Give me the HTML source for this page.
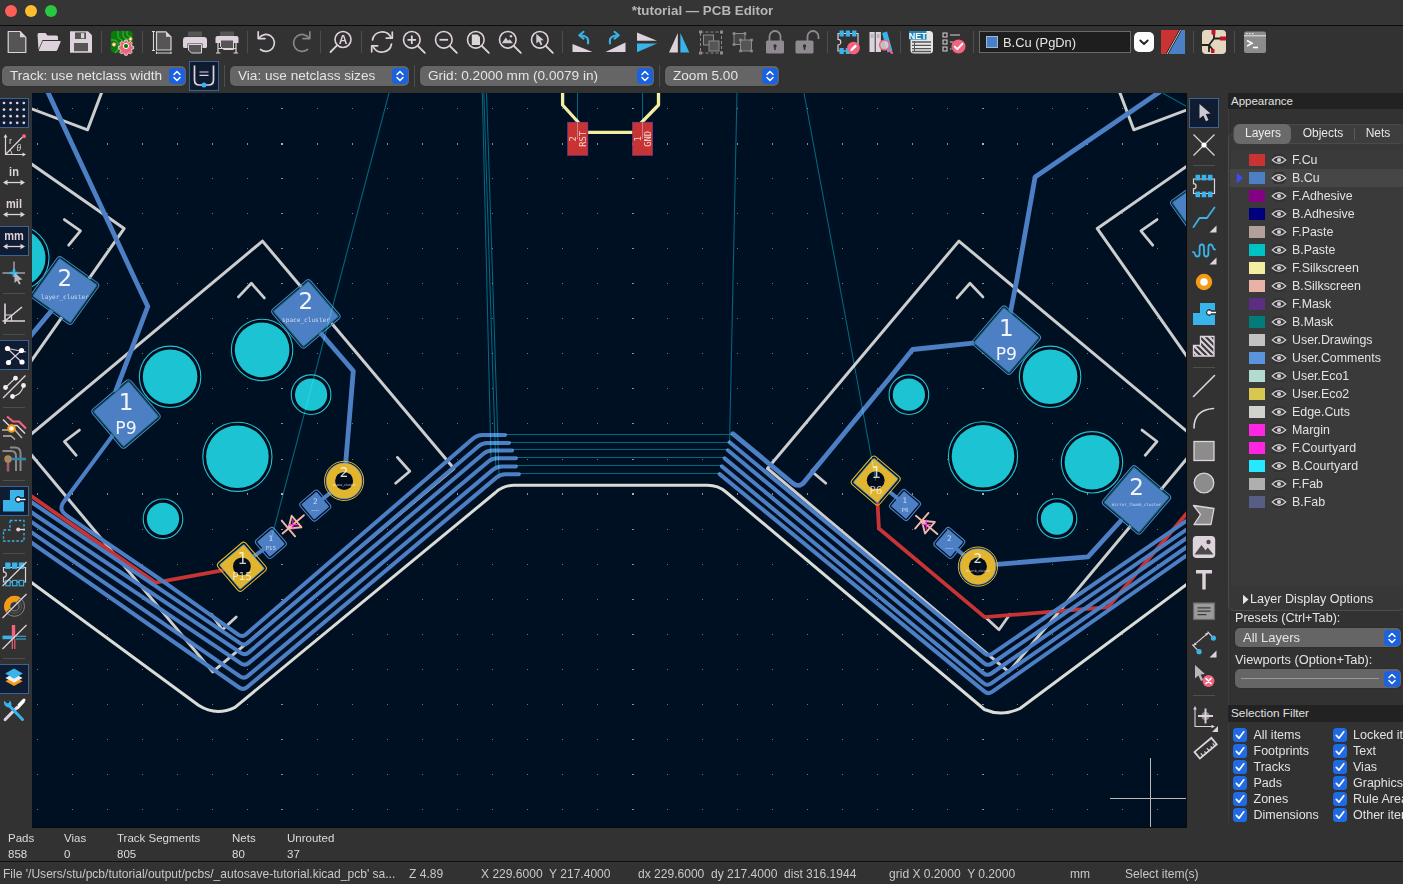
<!DOCTYPE html>
<html><head><meta charset="utf-8"><title>*tutorial — PCB Editor</title>
<style>
*{box-sizing:border-box;margin:0;padding:0}
html,body{width:1403px;height:884px;overflow:hidden;background:#323232}
body{font-family:"Liberation Sans",sans-serif;font-size:13px;color:#dfdfdf;position:relative}
.abs{position:absolute}
#titlebar{left:0;top:0;width:1403px;height:25px;background:#353535}
#titleline{left:0;top:25px;width:1403px;height:1px;background:#0c0c0c}
.tl{position:absolute;top:5px;width:12px;height:12px;border-radius:50%}
#title{left:0;top:3px;width:1403px;text-align:center;font-weight:bold;font-size:13.35px;padding-left:2px;color:#b6b6b6;letter-spacing:0px}
.sep{position:absolute;width:1px;background:#4e4e4e}
.ic{position:absolute;overflow:visible}
.dd{position:absolute;height:20px;top:66px;background:#656565;border-radius:5px;color:#e4e4e4;font-size:13.6px;line-height:20px;padding-left:8px;white-space:nowrap;box-shadow:0 0 0 0.5px #2a2a2a}
.dd .st{position:absolute;right:1.5px;top:2px;width:16px;height:16px;border-radius:4px;background:#1a62e0}
.st svg{position:absolute;left:0;top:0}
#canvas{left:32px;top:93px;width:1154px;height:734px;background:#001023;overflow:hidden}
.panelhdr{position:absolute;left:1228px;width:175px;height:16px;background:#222222;color:#e0e0e0;font-size:11.5px;line-height:16px;padding-left:3px}
.lay{position:absolute;left:1230px;width:173px;height:18px;font-size:12.4px;line-height:18px;color:#e2e2e2}
.lay .sw{position:absolute;left:19px;top:3px;width:16px;height:12px}
.lay .nm{position:absolute;left:62px;top:0}
.lay svg{position:absolute;left:41px;top:3px}
.cb{position:absolute;width:14px;height:14px;border-radius:3.5px;background:#1f6be6}
.cbl{position:absolute;font-size:12.5px;color:#e2e2e2;white-space:nowrap;line-height:16px}
.inf{position:absolute;font-size:11.5px;color:#dcdcdc;white-space:nowrap}
.stt{position:absolute;font-size:12.05px;color:#c8c8c8;white-space:nowrap;top:867px}
</style></head><body>
<div class="abs" id="titlebar"></div>
<div class="tl" style="left:5px;background:#fe5f57"></div>
<div class="tl" style="left:25px;background:#febc2e"></div>
<div class="tl" style="left:45px;background:#28c840"></div>
<div class="abs" id="title">*tutorial — PCB Editor</div>
<div class="abs" id="titleline"></div>
<div class="dd" style="left:2px;width:184px">Track: use netclass width<span class="st"><svg width="16" height="16" viewBox="0 0 16 16"><path d="M5 6.5L8 3.5L11 6.5M5 9.5L8 12.5L11 9.5" fill="none" stroke="#fff" stroke-width="1.5" stroke-linecap="round" stroke-linejoin="round"/></svg></span></div>
<div class="dd" style="left:230px;width:179px">Via: use netclass sizes<span class="st"><svg width="16" height="16" viewBox="0 0 16 16"><path d="M5 6.5L8 3.5L11 6.5M5 9.5L8 12.5L11 9.5" fill="none" stroke="#fff" stroke-width="1.5" stroke-linecap="round" stroke-linejoin="round"/></svg></span></div>
<div class="dd" style="left:420px;width:234px">Grid: 0.2000 mm (0.0079 in)<span class="st"><svg width="16" height="16" viewBox="0 0 16 16"><path d="M5 6.5L8 3.5L11 6.5M5 9.5L8 12.5L11 9.5" fill="none" stroke="#fff" stroke-width="1.5" stroke-linecap="round" stroke-linejoin="round"/></svg></span></div>
<div class="dd" style="left:665px;width:114px">Zoom 5.00<span class="st"><svg width="16" height="16" viewBox="0 0 16 16"><path d="M5 6.5L8 3.5L11 6.5M5 9.5L8 12.5L11 9.5" fill="none" stroke="#fff" stroke-width="1.5" stroke-linecap="round" stroke-linejoin="round"/></svg></span></div>
<div class="sep" style="left:101px;top:31px;height:22px"></div>
<div class="sep" style="left:142px;top:31px;height:22px"></div>
<div class="sep" style="left:247px;top:31px;height:22px"></div>
<div class="sep" style="left:320px;top:31px;height:22px"></div>
<div class="sep" style="left:361px;top:31px;height:22px"></div>
<div class="sep" style="left:562px;top:31px;height:22px"></div>
<div class="sep" style="left:827px;top:31px;height:22px"></div>
<div class="sep" style="left:900px;top:31px;height:22px"></div>
<div class="sep" style="left:973px;top:31px;height:22px"></div>
<div class="sep" style="left:1193px;top:31px;height:22px"></div>
<div class="sep" style="left:1234px;top:31px;height:22px"></div>
<div class="sep" style="left:224px;top:65px;height:22px"></div>
<div class="sep" style="left:414px;top:65px;height:22px"></div>
<div class="sep" style="left:659px;top:65px;height:22px"></div>
<svg class="ic" style="left:5.0px;top:30.0px" width="24" height="24" viewBox="0 0 24 24"><path d="M3.2 1.5 H15 L20.8 7.3 V22.5 H3.2 Z" fill="#555" stroke="#ded3dd" stroke-width="1.2" stroke-linejoin="round"/><path d="M15 1.5 V7.3 H20.8 Z" fill="#ded3dd"/></svg>
<svg class="ic" style="left:36.7px;top:30.0px" width="24" height="24" viewBox="0 0 24 24"><path d="M0.5 4.5 Q0.5 3 2 3 H8.5 L10.5 5.5 H19.5 Q21 5.5 21 7 V10 H5.5 L1.5 19.5 Z" fill="#ded3dd"/><path d="M5.8 11 H23 Q24 11 23.6 12 L20.2 20.2 Q19.8 21 18.8 21 H2.6 Q1.4 21 1.9 20 Z" fill="#ded3dd"/></svg>
<svg class="ic" style="left:69.0px;top:30.0px" width="24" height="24" viewBox="0 0 24 24"><path d="M1 1.2 H19 L23 5.2 V22.8 H1 Z" fill="#ded3dd"/><rect x="6" y="2.4" width="11" height="6.6" fill="#555"/><rect x="12" y="3.2" width="3.2" height="5" fill="#ded3dd"/><rect x="5" y="13" width="14" height="8.2" fill="#555"/></svg>
<svg class="ic" style="left:110.0px;top:30.0px" width="24" height="24" viewBox="0 0 24 24"><rect x="0.8" y="0.8" width="22" height="22" rx="4" fill="#0a7a0a"/><path d="M8 1 V6 Q8 8 10 9 L13 11 M13 1 V5 Q13 7 15 8 L19 10 M1 10 H4 Q6 10 7 12 L9 16 Q9.5 18 8 19.5 L5 23 M17 1 V4 Q17 5.5 18.5 6 L22 7.5" fill="none" stroke="#3da53d" stroke-width="1.3"/><circle cx="4" cy="14.5" r="1.7" fill="#fff" stroke="#f2a040" stroke-width="1"/><circle cx="20.5" cy="9" r="1.5" fill="#fff" stroke="#f2a040" stroke-width="1"/><circle cx="19" cy="22" r="1.3" fill="#f2a040"/><g transform="translate(16 16)"><path d="M-1.4 -7 h2.8 l.5 2 l1.6 .7 l1.8 -1.1 l2 2 l-1.1 1.8 l.7 1.6 l2 .5 v2.8 l-2 .5 l-.7 1.6 l1.1 1.8 l-2 2 l-1.8 -1.1 l-1.6 .7 l-.5 2 h-2.8 l-.5 -2 l-1.6 -.7 l-1.8 1.1 l-2 -2 l1.1 -1.8 l-.7 -1.6 l-2 -.5 v-2.8 l2 -.5 l.7 -1.6 l-1.1 -1.8 l2 -2 l1.8 1.1 l1.6 -.7 z" fill="#f2647e" stroke="#fff" stroke-width=".8" transform="scale(.86)"/><circle r="2.6" fill="#0a7a0a" stroke="#fff" stroke-width="1"/></g></svg>
<svg class="ic" style="left:149.5px;top:30.0px" width="24" height="24" viewBox="0 0 24 24"><path d="M6.5 1.8 H16 L21 6.8 V20 H6.5 Z" fill="#555" stroke="#ded3dd" stroke-width="1.2" stroke-linejoin="round"/><path d="M16 1.8 V6.8 H21 Z" fill="#ded3dd"/><path d="M3.5 1.5 V20.5 M2 1.5 H5 M2 20.5 H5 M6.5 23 H21 M6.5 21.5 V24 M21 21.5 V24" stroke="#ded3dd" stroke-width="1.1" fill="none"/></svg>
<svg class="ic" style="left:183.0px;top:30.0px" width="24" height="24" viewBox="0 0 24 24"><rect x="5" y="1.5" width="14" height="5" fill="#555"/><path d="M3 7 H21 Q24 7 24 10 V16.5 Q24 18 22.5 18 H19.5 V13.5 H4.5 V18 H1.5 Q0 18 0 16.5 V10 Q0 7 3 7 Z" fill="#ded3dd"/><path d="M5.5 14.5 H18.5 V23 H8.5 L5.5 20 Z" fill="#555" stroke="#ded3dd" stroke-width="1"/></svg>
<svg class="ic" style="left:215.0px;top:30.0px" width="24" height="24" viewBox="0 0 24 24"><rect x="5" y="1.5" width="14" height="4.5" fill="#555"/><path d="M2.5 6 H21.5 Q23.5 6 23.5 8 V13 H0.5 V8 Q0.5 6 2.5 6 Z" fill="#ded3dd"/><path d="M5.5 10 H18.5 V19.5 H8.5 L5.5 16.5 Z" fill="#555" stroke="#ded3dd" stroke-width="1"/><path d="M3 13 V23 M21 13 V23 M1 23 H5.5 M18.5 23 H23 M3 18.5 H21" stroke="#ded3dd" stroke-width="1.2" fill="none"/></svg>
<svg class="ic" style="left:255.4px;top:30.0px" width="24" height="24" viewBox="0 0 24 24"><path d="M4 8 A8.5 8.5 0 1 1 5.5 19.5" fill="none" stroke="#ded3dd" stroke-width="1.7" stroke-linecap="round"/><path d="M3.2 1.8 V8.6 H10" fill="none" stroke="#ded3dd" stroke-width="1.7" stroke-linecap="round" stroke-linejoin="round"/></svg>
<svg class="ic" style="left:288.6px;top:30.0px" width="24" height="24" viewBox="0 0 24 24"><path d="M20 8 A8.5 8.5 0 1 0 18.5 19.5" fill="none" stroke="#8a848a" stroke-width="1.7" stroke-linecap="round"/><path d="M20.8 1.8 V8.6 H14" fill="none" stroke="#8a848a" stroke-width="1.7" stroke-linecap="round" stroke-linejoin="round"/></svg>
<svg class="ic" style="left:329.0px;top:30.0px" width="24" height="24" viewBox="0 0 24 24"><circle cx="14" cy="9.5" r="8" fill="none" stroke="#ded3dd" stroke-width="1.6"/><path d="M8.3 15.2 L1.5 22" stroke="#ded3dd" stroke-width="1.8" stroke-linecap="round"/><text x="14" y="14" font-family="Liberation Sans,sans-serif" font-weight="bold" font-size="12" fill="#ded3dd" text-anchor="middle">A</text></svg>
<svg class="ic" style="left:369.8px;top:30.0px" width="24" height="24" viewBox="0 0 24 24"><path d="M2.5 10 A9.8 9.8 0 0 1 21 7.5 M21.5 14 A9.8 9.8 0 0 1 3 16.5" fill="none" stroke="#ded3dd" stroke-width="1.7" stroke-linecap="round"/><path d="M22.3 2.2 V8.2 H16.3 M1.7 21.8 V15.8 H7.7" fill="none" stroke="#ded3dd" stroke-width="1.7" stroke-linecap="round" stroke-linejoin="round"/></svg>
<svg class="ic" style="left:401.7px;top:30.0px" width="24" height="24" viewBox="0 0 24 24"><circle cx="9.8" cy="9.8" r="8.3" fill="none" stroke="#ded3dd" stroke-width="1.6"/><path d="M15.8 15.8 L22.8 22.8" stroke="#ded3dd" stroke-width="1.9" stroke-linecap="round"/><path d="M5.5 9.8 H14.1 M9.8 5.5 V14.1" stroke="#ded3dd" stroke-width="1.8"/></svg>
<svg class="ic" style="left:434.0px;top:30.0px" width="24" height="24" viewBox="0 0 24 24"><circle cx="9.8" cy="9.8" r="8.3" fill="none" stroke="#ded3dd" stroke-width="1.6"/><path d="M15.8 15.8 L22.8 22.8" stroke="#ded3dd" stroke-width="1.9" stroke-linecap="round"/><path d="M5.5 9.8 H14.1" stroke="#ded3dd" stroke-width="1.8"/></svg>
<svg class="ic" style="left:466.0px;top:30.0px" width="24" height="24" viewBox="0 0 24 24"><circle cx="9.8" cy="9.8" r="8.3" fill="none" stroke="#ded3dd" stroke-width="1.6"/><path d="M15.8 15.8 L22.8 22.8" stroke="#ded3dd" stroke-width="1.9" stroke-linecap="round"/><path d="M5.8 4.5 H11.5 L14 7 V15 H5.8 Z" fill="#d8d8d8"/></svg>
<svg class="ic" style="left:498.0px;top:30.0px" width="24" height="24" viewBox="0 0 24 24"><circle cx="9.8" cy="9.8" r="8.3" fill="none" stroke="#ded3dd" stroke-width="1.6"/><path d="M15.8 15.8 L22.8 22.8" stroke="#ded3dd" stroke-width="1.9" stroke-linecap="round"/><path d="M3.8 13.2 L7.8 7.6 L10.2 10.8 L11.8 9.2 L15 13.2 Z" fill="#d0cdd0"/><circle cx="13" cy="6.3" r="1.3" fill="#d0cdd0"/></svg>
<svg class="ic" style="left:530.0px;top:30.0px" width="24" height="24" viewBox="0 0 24 24"><circle cx="9.8" cy="9.8" r="8.3" fill="none" stroke="#ded3dd" stroke-width="1.6"/><path d="M15.8 15.8 L22.8 22.8" stroke="#ded3dd" stroke-width="1.9" stroke-linecap="round"/><path d="M6.3 3.8 L13.8 10.2 L10.6 10.6 L12.4 14.4 L10.6 15.2 L8.9 11.4 L6.3 13.4 Z" fill="#cfcccf"/></svg>
<svg class="ic" style="left:572.0px;top:30.0px" width="24" height="24" viewBox="0 0 24 24"><path d="M0.5 22 L0.5 14 L20.5 22 Z" fill="#ded3dd"/><path d="M16 13.5 Q17.5 6 9 5.2" fill="none" stroke="#39b4ea" stroke-width="2" stroke-linecap="round"/><path d="M11.5 1.8 L7.2 5.2 L11.5 8.6" fill="none" stroke="#39b4ea" stroke-width="2" stroke-linecap="round" stroke-linejoin="round"/></svg>
<svg class="ic" style="left:602.0px;top:30.0px" width="24" height="24" viewBox="0 0 24 24"><path d="M23.5 22 L23.5 12.5 L3.5 22 Z" fill="#ded3dd"/><path d="M8 13.5 Q6.5 6 15 5.2" fill="none" stroke="#39b4ea" stroke-width="2" stroke-linecap="round"/><path d="M12.5 1.8 L16.8 5.2 L12.5 8.6" fill="none" stroke="#39b4ea" stroke-width="2" stroke-linecap="round" stroke-linejoin="round"/></svg>
<svg class="ic" style="left:635.0px;top:30.0px" width="24" height="24" viewBox="0 0 24 24"><path d="M2 2.5 L22 10.8 H2 Z" fill="#ded3dd"/><path d="M2 22.3 L22 13.6 H2 Z" fill="#39b4ea"/></svg>
<svg class="ic" style="left:667.0px;top:30.0px" width="24" height="24" viewBox="0 0 24 24"><path d="M10.8 3 V22.5 H2 Z" fill="#ded3dd"/><path d="M13.4 3 V22.5 H22.3 Z" fill="#39b4ea"/></svg>
<svg class="ic" style="left:699.0px;top:30.0px" width="24" height="24" viewBox="0 0 24 24"><rect x="1.5" y="2" width="21" height="21" fill="none" stroke="#8f8a8f" stroke-width="1" stroke-dasharray="3 2"/><rect x="4.5" y="5" width="10" height="10" fill="#444" stroke="#8f8a8f" stroke-width="1"/><rect x="10" y="11" width="10" height="10" fill="#555" stroke="#8f8a8f" stroke-width="1"/><g fill="#8f8a8f"><rect x="0" y="0.5" width="3" height="3"/><rect x="21" y="0.5" width="3" height="3"/><rect x="0" y="21.5" width="3" height="3"/><rect x="21" y="21.5" width="3" height="3"/></g></svg>
<svg class="ic" style="left:731.0px;top:30.0px" width="24" height="24" viewBox="0 0 24 24"><rect x="3" y="3.5" width="11" height="11" fill="#444" stroke="#8f8a8f" stroke-width="1"/><rect x="9.5" y="10" width="11" height="11" fill="#555" stroke="#8f8a8f" stroke-width="1"/><g fill="#8f8a8f"><rect x="1.7" y="2.2" width="2.6" height="2.6"/><rect x="12.7" y="2.2" width="2.6" height="2.6"/><rect x="1.7" y="13.2" width="2.6" height="2.6"/><rect x="8.2" y="8.7" width="2.6" height="2.6"/><rect x="19.2" y="8.7" width="2.6" height="2.6"/><rect x="8.2" y="19.7" width="2.6" height="2.6"/><rect x="19.2" y="19.7" width="2.6" height="2.6"/></g></svg>
<svg class="ic" style="left:763.0px;top:30.0px" width="24" height="24" viewBox="0 0 24 24"><path d="M6.5 11 V6.5 A5.5 5.5 0 0 1 17.5 6.5 V11" fill="none" stroke="#8f8a8f" stroke-width="1.8"/><rect x="3" y="10.5" width="18" height="13" rx="1.5" fill="#8f8a8f"/><circle cx="12" cy="16" r="1.7" fill="#333"/><rect x="11.2" y="16" width="1.6" height="4" fill="#333"/></svg>
<svg class="ic" style="left:794.6px;top:30.0px" width="24" height="24" viewBox="0 0 24 24"><path d="M12.5 11 V6.5 A5.5 5.5 0 0 1 23.5 6.5 V9" fill="none" stroke="#8f8a8f" stroke-width="1.8"/><rect x="0.5" y="10.5" width="18" height="13" rx="1.5" fill="#8f8a8f"/><circle cx="9.5" cy="16" r="1.7" fill="#333"/><rect x="8.7" y="16" width="1.6" height="4" fill="#333"/></svg>
<svg class="ic" style="left:836.0px;top:30.0px" width="24" height="24" viewBox="0 0 24 24"><path d="M2 3.5 H22 V21 H2 V15 A2.8 2.8 0 0 0 2 9.4 Z" fill="none" stroke="#ded3dd" stroke-width="1.2"/><g fill="#39b4ea"><rect x="3.5" y="0.5" width="4.3" height="6"/><rect x="9.8" y="0.5" width="4.3" height="6"/><rect x="16.1" y="0.5" width="4.3" height="6"/><rect x="3.5" y="18" width="4.3" height="6"/><rect x="9.8" y="18" width="4.3" height="6"/></g><circle cx="17.5" cy="18" r="6.3" fill="#f2647e"/><path d="M14.3 21.2 L15 18.8 L19.3 14.5 L21 16.2 L16.7 20.5 Z" fill="#fff"/></svg>
<svg class="ic" style="left:868.5px;top:30.0px" width="24" height="24" viewBox="0 0 24 24"><rect x="0.5" y="2" width="5.2" height="20" fill="#ded3dd"/><rect x="6.7" y="2" width="5.2" height="20" fill="#ded3dd"/><path d="M13 3 L18 1.5 L23.5 21 L18.5 22.5 Z" fill="#39b4ea"/><path d="M1.8 5 H4.4 M1.8 7 H4.4 M8 5 H10.6 M8 7 H10.6" stroke="#777" stroke-width=".7"/><circle cx="15.5" cy="15" r="4.8" fill="#d9d9d9" fill-opacity=".85" stroke="#f2647e" stroke-width="1.6"/><path d="M19 18.8 L23 23" stroke="#f2647e" stroke-width="2.2" stroke-linecap="round"/></svg>
<svg class="ic" style="left:909.0px;top:30.0px" width="24" height="24" viewBox="0 0 24 24"><rect x="1.5" y="1" width="22.5" height="22.5" rx="3.5" fill="#e6e6e6"/><path d="M3 12 H22 M3 15.3 H22 M3 18.6 H22 M3 21.5 H22" stroke="#555" stroke-width="1.3"/><path d="M5.5 11 V22" stroke="#555" stroke-width="1"/><rect x="0" y="1" width="17.5" height="8.6" fill="#1f86b8"/><text x="8.7" y="8.6" font-family="Liberation Sans,sans-serif" font-weight="bold" font-size="9" fill="#fff" text-anchor="middle">NET</text></svg>
<svg class="ic" style="left:941.7px;top:30.0px" width="24" height="24" viewBox="0 0 24 24"><g fill="none" stroke="#ded3dd" stroke-width="1"><rect x="1" y="3" width="4" height="4"/><rect x="1" y="10" width="4" height="4"/><rect x="1" y="17" width="4" height="4"/><path d="M8 5 H18 M8 12 H11 M8 19 H9.5"/></g><circle cx="16.5" cy="16.5" r="7" fill="#f2647e"/><path d="M12.8 16.6 L15.4 19.2 L20.3 13.8" fill="none" stroke="#fff" stroke-width="2" stroke-linecap="round" stroke-linejoin="round"/></svg>
<svg class="ic" style="left:1161.0px;top:30.0px" width="24" height="24" viewBox="0 0 24 24"><rect x="0" y="0" width="24" height="24" fill="#4d7fc4"/><path d="M0 0 H19.5 L6 24 H0 Z" fill="#c83434"/><path d="M19.5 0 L6 24" stroke="#111" stroke-width="2.4"/><path d="M19.5 0 L6 24" stroke="#fff" stroke-width=".8"/></svg>
<svg class="ic" style="left:1202.0px;top:30.0px" width="24" height="24" viewBox="0 0 24 24"><rect x="0" y="0" width="24" height="24" rx="4" fill="#e3d7bf"/><path d="M12 3 V8.5 L19 8.5 M12 8.5 L7 15 V22 M0 15 H7 M7 15 L11 20" fill="none" stroke="#222" stroke-width="1.8"/><rect x="9.5" y="0" width="4" height="4.5" fill="#c8102e"/><rect x="18" y="6.5" width="6" height="4" fill="#c8102e"/><rect x="9" y="19" width="3.5" height="4" fill="#c8102e"/></svg>
<svg class="ic" style="left:1243.0px;top:30.0px" width="24" height="24" viewBox="0 0 24 24"><rect x="1" y="1.5" width="22" height="21.5" rx="2" fill="#8c8c8c"/><path d="M1 5.8 H23" stroke="#e8e8e8" stroke-width="1"/><path d="M3 3.6 h1.5 M6 3.6 h1.5 M9 3.6 h1.5" stroke="#e8e8e8" stroke-width="1.2"/><path d="M4 10.5 L9 13.3 L4 16.1" fill="none" stroke="#fff" stroke-width="1.6"/><path d="M10 17.5 H15" stroke="#fff" stroke-width="1.6"/></svg>
<div class="abs" style="left:979px;top:31px;width:152px;height:22px;background:#1e1e1e;border:1px solid #6a6a6a"></div>
<div class="abs" style="left:986px;top:36px;width:12px;height:12px;background:#4d7fc4;border:0.5px solid #9cb7de"></div>
<div class="abs" style="left:1003px;top:35px;font-size:12.9px;color:#e6e6e6;line-height:16px;white-space:nowrap">B.Cu (PgDn)</div>
<div class="abs" style="left:1134px;top:32px;width:20px;height:20px;background:#fdfdfd;border-radius:5px"></div>
<svg class="ic" style="left:1134px;top:32px" width="20" height="20" viewBox="0 0 20 20"><path d="M6.3 8.5 L10 12 L13.7 8.5" fill="none" stroke="#222" stroke-width="1.9" stroke-linecap="round" stroke-linejoin="round"/></svg>
<div class="abs" style="left:189px;top:61px;width:30px;height:30px;background:#0f1b31;border:1px solid #3b6393"></div>
<svg class="ic" style="left:192px;top:64px" width="24" height="24" viewBox="0 0 24 24"><path d="M2.5 1.5 V16 Q2.5 21 7.5 21 H16.5 Q21.5 21 21.5 16 V1.5" fill="none" stroke="#ded3dd" stroke-width="1.7"/><path d="M7.5 8 H16.5 M7.5 11.3 H16.5" stroke="#ded3dd" stroke-width="1.2"/><circle cx="12" cy="21" r="2.5" fill="#39b4ea"/></svg>
<div class="abs" id="canvas"><svg width="1154" height="734" viewBox="32 93 1154 734" style="display:block">
<rect x="32" y="93" width="1154" height="734" fill="#001023"/>
<path d="M37 108.5h1M37 178.5h1M37 213.5h1M37 248.5h1M37 283.5h1M37 318.5h1M37 353.5h1M37 388.5h1M37 423.5h1M37 459.5h1M37 529.5h1M37 564.5h1M37 599.5h1M37 634.5h1M37 669.5h1M37 704.5h1M37 739.5h1M37 774.5h1M37 809.5h1M72 108.5h1M72 178.5h1M72 213.5h1M72 248.5h1M72 283.5h1M72 318.5h1M72 353.5h1M72 388.5h1M72 423.5h1M72 459.5h1M72 529.5h1M72 564.5h1M72 599.5h1M72 634.5h1M72 669.5h1M72 704.5h1M72 739.5h1M72 774.5h1M72 809.5h1M107 108.5h1M107 178.5h1M107 213.5h1M107 248.5h1M107 283.5h1M107 318.5h1M107 353.5h1M107 388.5h1M107 423.5h1M107 459.5h1M107 529.5h1M107 564.5h1M107 599.5h1M107 634.5h1M107 669.5h1M107 704.5h1M107 739.5h1M107 774.5h1M107 809.5h1M142 108.5h1M142 178.5h1M142 213.5h1M142 248.5h1M142 283.5h1M142 318.5h1M142 353.5h1M142 388.5h1M142 423.5h1M142 459.5h1M142 529.5h1M142 564.5h1M142 599.5h1M142 634.5h1M142 669.5h1M142 704.5h1M142 739.5h1M142 774.5h1M142 809.5h1M177 108.5h1M177 178.5h1M177 213.5h1M177 248.5h1M177 283.5h1M177 318.5h1M177 353.5h1M177 388.5h1M177 423.5h1M177 459.5h1M177 529.5h1M177 564.5h1M177 599.5h1M177 634.5h1M177 669.5h1M177 704.5h1M177 739.5h1M177 774.5h1M177 809.5h1M212 108.5h1M212 178.5h1M212 213.5h1M212 248.5h1M212 283.5h1M212 318.5h1M212 353.5h1M212 388.5h1M212 423.5h1M212 459.5h1M212 529.5h1M212 564.5h1M212 599.5h1M212 634.5h1M212 669.5h1M212 704.5h1M212 739.5h1M212 774.5h1M212 809.5h1M247 108.5h1M247 178.5h1M247 213.5h1M247 248.5h1M247 283.5h1M247 318.5h1M247 353.5h1M247 388.5h1M247 423.5h1M247 459.5h1M247 529.5h1M247 564.5h1M247 599.5h1M247 634.5h1M247 669.5h1M247 704.5h1M247 739.5h1M247 774.5h1M247 809.5h1M317 108.5h1M317 178.5h1M317 213.5h1M317 248.5h1M317 283.5h1M317 318.5h1M317 353.5h1M317 388.5h1M317 423.5h1M317 459.5h1M317 529.5h1M317 564.5h1M317 599.5h1M317 634.5h1M317 669.5h1M317 704.5h1M317 739.5h1M317 774.5h1M317 809.5h1M352 108.5h1M352 178.5h1M352 213.5h1M352 248.5h1M352 283.5h1M352 318.5h1M352 353.5h1M352 388.5h1M352 423.5h1M352 459.5h1M352 529.5h1M352 564.5h1M352 599.5h1M352 634.5h1M352 669.5h1M352 704.5h1M352 739.5h1M352 774.5h1M352 809.5h1M387 108.5h1M387 178.5h1M387 213.5h1M387 248.5h1M387 283.5h1M387 318.5h1M387 353.5h1M387 388.5h1M387 423.5h1M387 459.5h1M387 529.5h1M387 564.5h1M387 599.5h1M387 634.5h1M387 669.5h1M387 704.5h1M387 739.5h1M387 774.5h1M387 809.5h1M422 108.5h1M422 178.5h1M422 213.5h1M422 248.5h1M422 283.5h1M422 318.5h1M422 353.5h1M422 388.5h1M422 423.5h1M422 459.5h1M422 529.5h1M422 564.5h1M422 599.5h1M422 634.5h1M422 669.5h1M422 704.5h1M422 739.5h1M422 774.5h1M422 809.5h1M457 108.5h1M457 178.5h1M457 213.5h1M457 248.5h1M457 283.5h1M457 318.5h1M457 353.5h1M457 388.5h1M457 423.5h1M457 459.5h1M457 529.5h1M457 564.5h1M457 599.5h1M457 634.5h1M457 669.5h1M457 704.5h1M457 739.5h1M457 774.5h1M457 809.5h1M492 108.5h1M492 178.5h1M492 213.5h1M492 248.5h1M492 283.5h1M492 318.5h1M492 353.5h1M492 388.5h1M492 423.5h1M492 459.5h1M492 529.5h1M492 564.5h1M492 599.5h1M492 634.5h1M492 669.5h1M492 704.5h1M492 739.5h1M492 774.5h1M492 809.5h1M527 108.5h1M527 178.5h1M527 213.5h1M527 248.5h1M527 283.5h1M527 318.5h1M527 353.5h1M527 388.5h1M527 423.5h1M527 459.5h1M527 529.5h1M527 564.5h1M527 599.5h1M527 634.5h1M527 669.5h1M527 704.5h1M527 739.5h1M527 774.5h1M527 809.5h1M562 108.5h1M562 178.5h1M562 213.5h1M562 248.5h1M562 283.5h1M562 318.5h1M562 353.5h1M562 388.5h1M562 423.5h1M562 459.5h1M562 529.5h1M562 564.5h1M562 599.5h1M562 634.5h1M562 669.5h1M562 704.5h1M562 739.5h1M562 774.5h1M562 809.5h1M597 108.5h1M597 178.5h1M597 213.5h1M597 248.5h1M597 283.5h1M597 318.5h1M597 353.5h1M597 388.5h1M597 423.5h1M597 459.5h1M597 529.5h1M597 564.5h1M597 599.5h1M597 634.5h1M597 669.5h1M597 704.5h1M597 739.5h1M597 774.5h1M597 809.5h1M667 108.5h1M667 178.5h1M667 213.5h1M667 248.5h1M667 283.5h1M667 318.5h1M667 353.5h1M667 388.5h1M667 423.5h1M667 459.5h1M667 529.5h1M667 564.5h1M667 599.5h1M667 634.5h1M667 669.5h1M667 704.5h1M667 739.5h1M667 774.5h1M667 809.5h1M702 108.5h1M702 178.5h1M702 213.5h1M702 248.5h1M702 283.5h1M702 318.5h1M702 353.5h1M702 388.5h1M702 423.5h1M702 459.5h1M702 529.5h1M702 564.5h1M702 599.5h1M702 634.5h1M702 669.5h1M702 704.5h1M702 739.5h1M702 774.5h1M702 809.5h1M737 108.5h1M737 178.5h1M737 213.5h1M737 248.5h1M737 283.5h1M737 318.5h1M737 353.5h1M737 388.5h1M737 423.5h1M737 459.5h1M737 529.5h1M737 564.5h1M737 599.5h1M737 634.5h1M737 669.5h1M737 704.5h1M737 739.5h1M737 774.5h1M737 809.5h1M772 108.5h1M772 178.5h1M772 213.5h1M772 248.5h1M772 283.5h1M772 318.5h1M772 353.5h1M772 388.5h1M772 423.5h1M772 459.5h1M772 529.5h1M772 564.5h1M772 599.5h1M772 634.5h1M772 669.5h1M772 704.5h1M772 739.5h1M772 774.5h1M772 809.5h1M807 108.5h1M807 178.5h1M807 213.5h1M807 248.5h1M807 283.5h1M807 318.5h1M807 353.5h1M807 388.5h1M807 423.5h1M807 459.5h1M807 529.5h1M807 564.5h1M807 599.5h1M807 634.5h1M807 669.5h1M807 704.5h1M807 739.5h1M807 774.5h1M807 809.5h1M842 108.5h1M842 178.5h1M842 213.5h1M842 248.5h1M842 283.5h1M842 318.5h1M842 353.5h1M842 388.5h1M842 423.5h1M842 459.5h1M842 529.5h1M842 564.5h1M842 599.5h1M842 634.5h1M842 669.5h1M842 704.5h1M842 739.5h1M842 774.5h1M842 809.5h1M877 108.5h1M877 178.5h1M877 213.5h1M877 248.5h1M877 283.5h1M877 318.5h1M877 353.5h1M877 388.5h1M877 423.5h1M877 459.5h1M877 529.5h1M877 564.5h1M877 599.5h1M877 634.5h1M877 669.5h1M877 704.5h1M877 739.5h1M877 774.5h1M877 809.5h1M912 108.5h1M912 178.5h1M912 213.5h1M912 248.5h1M912 283.5h1M912 318.5h1M912 353.5h1M912 388.5h1M912 423.5h1M912 459.5h1M912 529.5h1M912 564.5h1M912 599.5h1M912 634.5h1M912 669.5h1M912 704.5h1M912 739.5h1M912 774.5h1M912 809.5h1M947 108.5h1M947 178.5h1M947 213.5h1M947 248.5h1M947 283.5h1M947 318.5h1M947 353.5h1M947 388.5h1M947 423.5h1M947 459.5h1M947 529.5h1M947 564.5h1M947 599.5h1M947 634.5h1M947 669.5h1M947 704.5h1M947 739.5h1M947 774.5h1M947 809.5h1M1017 108.5h1M1017 178.5h1M1017 213.5h1M1017 248.5h1M1017 283.5h1M1017 318.5h1M1017 353.5h1M1017 388.5h1M1017 423.5h1M1017 459.5h1M1017 529.5h1M1017 564.5h1M1017 599.5h1M1017 634.5h1M1017 669.5h1M1017 704.5h1M1017 739.5h1M1017 774.5h1M1017 809.5h1M1052 108.5h1M1052 178.5h1M1052 213.5h1M1052 248.5h1M1052 283.5h1M1052 318.5h1M1052 353.5h1M1052 388.5h1M1052 423.5h1M1052 459.5h1M1052 529.5h1M1052 564.5h1M1052 599.5h1M1052 634.5h1M1052 669.5h1M1052 704.5h1M1052 739.5h1M1052 774.5h1M1052 809.5h1M1087 108.5h1M1087 178.5h1M1087 213.5h1M1087 248.5h1M1087 283.5h1M1087 318.5h1M1087 353.5h1M1087 388.5h1M1087 423.5h1M1087 459.5h1M1087 529.5h1M1087 564.5h1M1087 599.5h1M1087 634.5h1M1087 669.5h1M1087 704.5h1M1087 739.5h1M1087 774.5h1M1087 809.5h1M1122 108.5h1M1122 178.5h1M1122 213.5h1M1122 248.5h1M1122 283.5h1M1122 318.5h1M1122 353.5h1M1122 388.5h1M1122 423.5h1M1122 459.5h1M1122 529.5h1M1122 564.5h1M1122 599.5h1M1122 634.5h1M1122 669.5h1M1122 704.5h1M1122 739.5h1M1122 774.5h1M1122 809.5h1M1157 108.5h1M1157 178.5h1M1157 213.5h1M1157 248.5h1M1157 283.5h1M1157 318.5h1M1157 353.5h1M1157 388.5h1M1157 423.5h1M1157 459.5h1M1157 529.5h1M1157 564.5h1M1157 599.5h1M1157 634.5h1M1157 669.5h1M1157 704.5h1M1157 739.5h1M1157 774.5h1M1157 809.5h1" stroke="#72777e" stroke-width="1" fill="none" shape-rendering="crispEdges"/>
<g fill="#8d9095" shape-rendering="crispEdges"><rect x="37" y="143" width="1" height="2"/><rect x="37" y="493" width="1" height="2"/><rect x="72" y="143" width="1" height="2"/><rect x="72" y="493" width="1" height="2"/><rect x="107" y="143" width="1" height="2"/><rect x="107" y="493" width="1" height="2"/><rect x="142" y="143" width="1" height="2"/><rect x="142" y="493" width="1" height="2"/><rect x="177" y="143" width="1" height="2"/><rect x="177" y="493" width="1" height="2"/><rect x="212" y="143" width="1" height="2"/><rect x="212" y="493" width="1" height="2"/><rect x="247" y="143" width="1" height="2"/><rect x="247" y="493" width="1" height="2"/><rect x="281" y="108" width="2" height="1"/><rect x="281" y="178" width="2" height="1"/><rect x="281" y="213" width="2" height="1"/><rect x="281" y="248" width="2" height="1"/><rect x="281" y="283" width="2" height="1"/><rect x="281" y="318" width="2" height="1"/><rect x="281" y="353" width="2" height="1"/><rect x="281" y="388" width="2" height="1"/><rect x="281" y="423" width="2" height="1"/><rect x="281" y="459" width="2" height="1"/><rect x="281" y="529" width="2" height="1"/><rect x="281" y="564" width="2" height="1"/><rect x="281" y="599" width="2" height="1"/><rect x="281" y="634" width="2" height="1"/><rect x="281" y="669" width="2" height="1"/><rect x="281" y="704" width="2" height="1"/><rect x="281" y="739" width="2" height="1"/><rect x="281" y="774" width="2" height="1"/><rect x="281" y="809" width="2" height="1"/><rect x="317" y="143" width="1" height="2"/><rect x="317" y="493" width="1" height="2"/><rect x="352" y="143" width="1" height="2"/><rect x="352" y="493" width="1" height="2"/><rect x="387" y="143" width="1" height="2"/><rect x="387" y="493" width="1" height="2"/><rect x="422" y="143" width="1" height="2"/><rect x="422" y="493" width="1" height="2"/><rect x="457" y="143" width="1" height="2"/><rect x="457" y="493" width="1" height="2"/><rect x="492" y="143" width="1" height="2"/><rect x="492" y="493" width="1" height="2"/><rect x="527" y="143" width="1" height="2"/><rect x="527" y="493" width="1" height="2"/><rect x="562" y="143" width="1" height="2"/><rect x="562" y="493" width="1" height="2"/><rect x="597" y="143" width="1" height="2"/><rect x="597" y="493" width="1" height="2"/><rect x="632" y="108" width="2" height="1"/><rect x="632" y="178" width="2" height="1"/><rect x="632" y="213" width="2" height="1"/><rect x="632" y="248" width="2" height="1"/><rect x="632" y="283" width="2" height="1"/><rect x="632" y="318" width="2" height="1"/><rect x="632" y="353" width="2" height="1"/><rect x="632" y="388" width="2" height="1"/><rect x="632" y="423" width="2" height="1"/><rect x="632" y="459" width="2" height="1"/><rect x="632" y="529" width="2" height="1"/><rect x="632" y="564" width="2" height="1"/><rect x="632" y="599" width="2" height="1"/><rect x="632" y="634" width="2" height="1"/><rect x="632" y="669" width="2" height="1"/><rect x="632" y="704" width="2" height="1"/><rect x="632" y="739" width="2" height="1"/><rect x="632" y="774" width="2" height="1"/><rect x="632" y="809" width="2" height="1"/><rect x="667" y="143" width="1" height="2"/><rect x="667" y="493" width="1" height="2"/><rect x="702" y="143" width="1" height="2"/><rect x="702" y="493" width="1" height="2"/><rect x="737" y="143" width="1" height="2"/><rect x="737" y="493" width="1" height="2"/><rect x="772" y="143" width="1" height="2"/><rect x="772" y="493" width="1" height="2"/><rect x="807" y="143" width="1" height="2"/><rect x="807" y="493" width="1" height="2"/><rect x="842" y="143" width="1" height="2"/><rect x="842" y="493" width="1" height="2"/><rect x="877" y="143" width="1" height="2"/><rect x="877" y="493" width="1" height="2"/><rect x="912" y="143" width="1" height="2"/><rect x="912" y="493" width="1" height="2"/><rect x="947" y="143" width="1" height="2"/><rect x="947" y="493" width="1" height="2"/><rect x="982" y="108" width="2" height="1"/><rect x="982" y="178" width="2" height="1"/><rect x="982" y="213" width="2" height="1"/><rect x="982" y="248" width="2" height="1"/><rect x="982" y="283" width="2" height="1"/><rect x="982" y="318" width="2" height="1"/><rect x="982" y="353" width="2" height="1"/><rect x="982" y="388" width="2" height="1"/><rect x="982" y="423" width="2" height="1"/><rect x="982" y="459" width="2" height="1"/><rect x="982" y="529" width="2" height="1"/><rect x="982" y="564" width="2" height="1"/><rect x="982" y="599" width="2" height="1"/><rect x="982" y="634" width="2" height="1"/><rect x="982" y="669" width="2" height="1"/><rect x="982" y="704" width="2" height="1"/><rect x="982" y="739" width="2" height="1"/><rect x="982" y="774" width="2" height="1"/><rect x="982" y="809" width="2" height="1"/><rect x="1017" y="143" width="1" height="2"/><rect x="1017" y="493" width="1" height="2"/><rect x="1052" y="143" width="1" height="2"/><rect x="1052" y="493" width="1" height="2"/><rect x="1087" y="143" width="1" height="2"/><rect x="1087" y="493" width="1" height="2"/><rect x="1122" y="143" width="1" height="2"/><rect x="1122" y="493" width="1" height="2"/><rect x="1157" y="143" width="1" height="2"/><rect x="1157" y="493" width="1" height="2"/></g>
<g fill="#b4b1ac" shape-rendering="crispEdges"><rect x="281" y="143" width="2" height="2"/><rect x="281" y="493" width="2" height="2"/><rect x="632" y="143" width="2" height="2"/><rect x="632" y="493" width="2" height="2"/><rect x="982" y="143" width="2" height="2"/><rect x="982" y="493" width="2" height="2"/></g>
<path d="M262.5 241.1 L453.9 468.5 L212.7 671.9 L21.1 442.6 L262.5 241.1" fill="none" stroke="#cdcdcd" stroke-width="3.0" stroke-linecap="round" stroke-linejoin="round" />
<path d="M958.9 241.1 L767.5 468.5 L1008.7 671.9 L1200.3 442.6 L958.9 241.1" fill="none" stroke="#cdcdcd" stroke-width="3.0" stroke-linecap="round" stroke-linejoin="round" />
<path d="M20.0 156.0 L124.1 228.6 L20.0 377.0" fill="none" stroke="#cdcdcd" stroke-width="3.0" stroke-linecap="round" stroke-linejoin="round" />
<path d="M1201.4 156.0 L1097.3 228.6 L1201.4 377.0" fill="none" stroke="#cdcdcd" stroke-width="3.0" stroke-linecap="round" stroke-linejoin="round" />
<path d="M101.8 92.0 L87.6 129.8 L20.0 104.5" fill="none" stroke="#cdcdcd" stroke-width="3.0" stroke-linecap="round" stroke-linejoin="round" />
<path d="M1119.6 92.0 L1133.8 129.8 L1201.4 104.5" fill="none" stroke="#cdcdcd" stroke-width="3.0" stroke-linecap="round" stroke-linejoin="round" />
<path d="M64.4 219.6 L80.5 230.8 L68.7 245.2" fill="none" stroke="#cdcdcd" stroke-width="2.8" stroke-linecap="round" stroke-linejoin="round" />
<path d="M1157.0 219.6 L1140.9 230.8 L1152.7 245.2" fill="none" stroke="#cdcdcd" stroke-width="2.8" stroke-linecap="round" stroke-linejoin="round" />
<path d="M238.5 296.9 L251.4 283.3 L264.3 297.9" fill="none" stroke="#cdcdcd" stroke-width="2.8" stroke-linecap="round" stroke-linejoin="round" />
<path d="M982.9 296.9 L970.0 283.3 L957.1 297.9" fill="none" stroke="#cdcdcd" stroke-width="2.8" stroke-linecap="round" stroke-linejoin="round" />
<path d="M79.4 430.1 L64.4 441.5 L76.2 455.3" fill="none" stroke="#cdcdcd" stroke-width="2.8" stroke-linecap="round" stroke-linejoin="round" />
<path d="M1142.0 430.1 L1157.0 441.5 L1145.2 455.3" fill="none" stroke="#cdcdcd" stroke-width="2.8" stroke-linecap="round" stroke-linejoin="round" />
<path d="M397.4 457.4 L409.8 471.3 L395.6 483.2" fill="none" stroke="#cdcdcd" stroke-width="2.8" stroke-linecap="round" stroke-linejoin="round" />
<path d="M824.0 457.4 L811.6 471.3 L825.8 483.2" fill="none" stroke="#cdcdcd" stroke-width="2.8" stroke-linecap="round" stroke-linejoin="round" />
<path d="M211.5 614.3 L222.4 629.7 L236.2 617.0" fill="none" stroke="#cdcdcd" stroke-width="2.8" stroke-linecap="round" stroke-linejoin="round" />
<path d="M1009.9 614.3 L999.0 629.7 L985.2 617.0" fill="none" stroke="#cdcdcd" stroke-width="2.8" stroke-linecap="round" stroke-linejoin="round" />
<path d="M20 574 L198.5 705.3 Q216 716.5 235 707.3 L495.5 492.5 Q503.5 485.3 514 485.3 L707.5 485.3 Q718 485.3 726 492 L984.5 709.5 Q1002 717 1020 708.5 L1200 574.5" fill="none" stroke="#dbdcd6" stroke-width="3" stroke-linejoin="round"/>
<path d="M562.6 90.0 L562.6 105.0 L578.5 122.5" fill="none" stroke="#f2eda1" stroke-width="3.3" stroke-linecap="round" stroke-linejoin="round" />
<path d="M658.5 90.0 L658.5 105.0 L641.5 122.5" fill="none" stroke="#f2eda1" stroke-width="3.3" stroke-linecap="round" stroke-linejoin="round" />
<path d="M588.0 132.3 L632.0 132.3" fill="none" stroke="#f2eda1" stroke-width="3.3" stroke-linecap="round" stroke-linejoin="round" />
<path d="M20.0 488.3 L155.5 582.6 L222.3 570.4" fill="none" stroke="#c83434" stroke-width="3.8" stroke-linecap="round" stroke-linejoin="round" />
<path d="M877.4 500.0 L878.9 528.5 L984.7 617.1 L1108.1 607.1 L1200.0 497.6" fill="none" stroke="#c83434" stroke-width="3.8" stroke-linecap="round" stroke-linejoin="round" />
<path d="M112.7 435.5 L65.6 499.2 Q62.6 503.2 62.0 504.9 L61.9 505.3 Q61.3 507.0 61.5 508.6 L61.6 508.9 Q61.8 510.5 63.0 512.1 L63.3 512.4 Q64.5 514.0 68.6 516.8 L99.4 537.8 Q103.5 540.6 107.6 543.4 L155.3 576.0 Q159.4 578.8 163.5 581.7 L238.2 634.6 Q242.3 637.5 246.1 634.2 L473.4 438.3 Q477.2 435.0 482.2 435.0 L505.0 435.0" fill="none" stroke="#4d7fc4" stroke-width="4.0" stroke-linecap="round" stroke-linejoin="round" />
<path d="M20.0 494.4 L240.0 643.2 Q244.1 646.0 247.9 642.8 L478.5 446.2 Q482.3 443.0 487.3 443.0 L509.0 443.0" fill="none" stroke="#4d7fc4" stroke-width="4.0" stroke-linecap="round" stroke-linejoin="round" />
<path d="M20.0 504.7 L240.8 652.8 Q245.0 655.6 248.8 652.4 L483.4 453.7 Q487.2 450.5 492.2 450.5 L512.1 450.5" fill="none" stroke="#4d7fc4" stroke-width="4.0" stroke-linecap="round" stroke-linejoin="round" />
<path d="M20.0 514.2 L240.9 663.3 Q245.0 666.1 248.8 662.9 L488.4 461.5 Q492.2 458.3 497.2 458.3 L515.9 458.3" fill="none" stroke="#4d7fc4" stroke-width="4.0" stroke-linecap="round" stroke-linejoin="round" />
<path d="M20.0 524.4 L240.0 676.3 Q244.1 679.1 247.9 675.9 L493.0 469.6 Q496.8 466.4 501.8 466.4 L515.9 466.4" fill="none" stroke="#4d7fc4" stroke-width="4.0" stroke-linecap="round" stroke-linejoin="round" />
<path d="M20.0 534.6 L239.1 687.5 Q243.2 690.4 247.0 687.2 L496.6 477.4 Q500.4 474.2 505.4 474.2 L518.9 474.2" fill="none" stroke="#4d7fc4" stroke-width="4.0" stroke-linecap="round" stroke-linejoin="round" />
<path d="M729.6 442.3 L984.4 653.2 Q988.3 656.4 992.4 653.6 L1200.0 511.6" fill="none" stroke="#4d7fc4" stroke-width="4.0" stroke-linecap="round" stroke-linejoin="round" />
<path d="M727.9 450.3 L984.0 663.1 Q987.8 666.3 991.9 663.5 L1200.0 520.2" fill="none" stroke="#4d7fc4" stroke-width="4.0" stroke-linecap="round" stroke-linejoin="round" />
<path d="M724.7 458.4 L983.4 673.1 Q987.2 676.3 991.3 673.5 L1200.0 528.8" fill="none" stroke="#4d7fc4" stroke-width="4.0" stroke-linecap="round" stroke-linejoin="round" />
<path d="M721.9 466.4 L983.3 683.0 Q987.2 686.2 991.3 683.3 L1200.0 537.8" fill="none" stroke="#4d7fc4" stroke-width="4.0" stroke-linecap="round" stroke-linejoin="round" />
<path d="M719.7 474.1 L984.4 691.4 Q988.3 694.6 992.4 691.7 L1200.0 546.0" fill="none" stroke="#4d7fc4" stroke-width="4.0" stroke-linecap="round" stroke-linejoin="round" />
<path d="M732.8 433.7 L792.5 483.0 L796.0 485.2 L800.0 485.3 L803.0 483.5 L888.0 380.0 L912.6 349.5 L972.7 343.1" fill="none" stroke="#4d7fc4" stroke-width="4.8" stroke-linecap="round" stroke-linejoin="round" />
<path d="M47.8 92.0 L135.3 280.0 L147.8 306.5 L116.0 390.4" fill="none" stroke="#4d7fc4" stroke-width="4.8" stroke-linecap="round" stroke-linejoin="round" />
<path d="M1159.5 92.0 L1035.1 177.0 L1016.8 280.0 L1010.3 313.0" fill="none" stroke="#4d7fc4" stroke-width="4.8" stroke-linecap="round" stroke-linejoin="round" />
<path d="M51.5 310.8 L20.0 348.5" fill="none" stroke="#4d7fc4" stroke-width="4.8" stroke-linecap="round" stroke-linejoin="round" />
<path d="M318.0 330.0 L353.3 371.0 L345.8 461.7" fill="none" stroke="#4d7fc4" stroke-width="4.8" stroke-linecap="round" stroke-linejoin="round" />
<path d="M997.0 564.3 L1088.0 556.9 L1120.6 521.0" fill="none" stroke="#4d7fc4" stroke-width="4.8" stroke-linecap="round" stroke-linejoin="round" />
<path d="M254.6 555.7 L264.3 548.9" fill="none" stroke="#4d7fc4" stroke-width="4.0" stroke-linecap="round" stroke-linejoin="round" />
<path d="M323.4 498.4 L332.0 491.5" fill="none" stroke="#4d7fc4" stroke-width="4.0" stroke-linecap="round" stroke-linejoin="round" />
<path d="M891.0 493.0 L899.0 499.5" fill="none" stroke="#4d7fc4" stroke-width="4.0" stroke-linecap="round" stroke-linejoin="round" />
<path d="M957.0 549.5 L966.0 557.0" fill="none" stroke="#4d7fc4" stroke-width="4.0" stroke-linecap="round" stroke-linejoin="round" />
<circle cx="262.1" cy="349.9" r="30.7" fill="#000c1b" stroke="#1cc3d3" stroke-width="1.1"/>
<circle cx="262.1" cy="349.9" r="27.3" fill="#1cc3d3"/>
<circle cx="170.1" cy="376.8" r="30.7" fill="#000c1b" stroke="#1cc3d3" stroke-width="1.1"/>
<circle cx="170.1" cy="376.8" r="27.3" fill="#1cc3d3"/>
<circle cx="311.1" cy="394.7" r="19.8" fill="#000c1b" stroke="#1cc3d3" stroke-width="1.1"/>
<circle cx="311.1" cy="394.7" r="16.1" fill="#1cc3d3"/>
<circle cx="237.4" cy="456.8" r="34.6" fill="#000c1b" stroke="#1cc3d3" stroke-width="1.1"/>
<circle cx="237.4" cy="456.8" r="31.3" fill="#1cc3d3"/>
<circle cx="163.0" cy="518.8" r="19.8" fill="#000c1b" stroke="#1cc3d3" stroke-width="1.1"/>
<circle cx="163.0" cy="518.8" r="16.1" fill="#1cc3d3"/>
<circle cx="16.5" cy="258.0" r="32.5" fill="#000c1b" stroke="#1cc3d3" stroke-width="1.1"/>
<circle cx="16.5" cy="258.0" r="29.0" fill="#1cc3d3"/>
<circle cx="1050.1" cy="376.8" r="30.7" fill="#000c1b" stroke="#1cc3d3" stroke-width="1.1"/>
<circle cx="1050.1" cy="376.8" r="27.3" fill="#1cc3d3"/>
<circle cx="908.9" cy="394.7" r="19.8" fill="#000c1b" stroke="#1cc3d3" stroke-width="1.1"/>
<circle cx="908.9" cy="394.7" r="16.1" fill="#1cc3d3"/>
<circle cx="983.0" cy="456.3" r="34.6" fill="#000c1b" stroke="#1cc3d3" stroke-width="1.1"/>
<circle cx="983.0" cy="456.3" r="31.3" fill="#1cc3d3"/>
<circle cx="1092.0" cy="462.3" r="30.7" fill="#000c1b" stroke="#1cc3d3" stroke-width="1.1"/>
<circle cx="1092.0" cy="462.3" r="27.3" fill="#1cc3d3"/>
<circle cx="1057.0" cy="518.6" r="19.8" fill="#000c1b" stroke="#1cc3d3" stroke-width="1.1"/>
<circle cx="1057.0" cy="518.6" r="16.1" fill="#1cc3d3"/>
<rect x="100.83" y="388.83" width="50.35" height="50.35" rx="3.5" fill="none" stroke="#4d7fc4" stroke-width="1.1" transform="rotate(-40.5 126.0 414.0)"/>
<rect x="102.67" y="390.67" width="46.67" height="46.67" rx="1.5" fill="#4d7fc4" stroke="#0a6464" stroke-width="1" transform="rotate(-40.5 126.0 414.0)"/>
<text x="126.0" y="409.5" font-family="'DejaVu Sans','Liberation Sans',sans-serif" font-size="23" fill="#ffffff" fill-opacity="0.92" text-anchor="middle" >1</text>
<text x="126.0" y="433.7" font-family="'DejaVu Sans','Liberation Sans',sans-serif" font-size="17.2" fill="#ffffff" fill-opacity="0.92" text-anchor="middle" >P9</text>
<rect x="981.23" y="314.93" width="50.35" height="50.35" rx="3.5" fill="none" stroke="#4d7fc4" stroke-width="1.1" transform="rotate(40.5 1006.4 340.1)"/>
<rect x="983.07" y="316.77" width="46.67" height="46.67" rx="1.5" fill="#4d7fc4" stroke="#0a6464" stroke-width="1" transform="rotate(40.5 1006.4 340.1)"/>
<text x="1006.4" y="335.6" font-family="'DejaVu Sans','Liberation Sans',sans-serif" font-size="23" fill="#ffffff" fill-opacity="0.92" text-anchor="middle" >1</text>
<text x="1006.4" y="359.8" font-family="'DejaVu Sans','Liberation Sans',sans-serif" font-size="17.2" fill="#ffffff" fill-opacity="0.92" text-anchor="middle" >P9</text>
<rect x="39.73" y="265.33" width="50.35" height="50.35" rx="3.5" fill="none" stroke="#4d7fc4" stroke-width="1.1" transform="rotate(35.5 64.9 290.5)"/>
<rect x="41.57" y="267.17" width="46.67" height="46.67" rx="1.5" fill="#4d7fc4" stroke="#0a6464" stroke-width="1" transform="rotate(35.5 64.9 290.5)"/>
<text x="64.9" y="286.0" font-family="'DejaVu Sans','Liberation Sans',sans-serif" font-size="23" fill="#ffffff" fill-opacity="0.92" text-anchor="middle" >2</text>
<text x="64.9" y="299.0" font-family="'DejaVu Sans Mono','Liberation Sans',sans-serif" font-size="6.1" fill="#ffffff" fill-opacity="0.7" text-anchor="middle" >layer_cluster</text>
<rect x="280.73" y="288.73" width="50.35" height="50.35" rx="3.5" fill="none" stroke="#4d7fc4" stroke-width="1.1" transform="rotate(-40.5 305.9 313.9)"/>
<rect x="282.57" y="290.57" width="46.67" height="46.67" rx="1.5" fill="#4d7fc4" stroke="#0a6464" stroke-width="1" transform="rotate(-40.5 305.9 313.9)"/>
<text x="305.9" y="309.4" font-family="'DejaVu Sans','Liberation Sans',sans-serif" font-size="23" fill="#ffffff" fill-opacity="0.92" text-anchor="middle" >2</text>
<text x="305.9" y="322.4" font-family="'DejaVu Sans Mono','Liberation Sans',sans-serif" font-size="6.1" fill="#ffffff" fill-opacity="0.7" text-anchor="middle" >space_cluster</text>
<rect x="1111.33" y="474.73" width="50.35" height="50.35" rx="3.5" fill="none" stroke="#4d7fc4" stroke-width="1.1" transform="rotate(40.5 1136.5 499.9)"/>
<rect x="1113.17" y="476.57" width="46.67" height="46.67" rx="1.5" fill="#4d7fc4" stroke="#0a6464" stroke-width="1" transform="rotate(40.5 1136.5 499.9)"/>
<text x="1136.5" y="495.4" font-family="'DejaVu Sans','Liberation Sans',sans-serif" font-size="23" fill="#ffffff" fill-opacity="0.92" text-anchor="middle" >2</text>
<text x="1136.5" y="505.8" font-family="'DejaVu Sans Mono','Liberation Sans',sans-serif" font-size="4.1" fill="#ffffff" fill-opacity="0.7" text-anchor="middle" >mirror_thumb_cluster</text>
<rect x="1179.23" y="182.83" width="50.35" height="50.35" rx="3.5" fill="none" stroke="#4d7fc4" stroke-width="1.1" transform="rotate(-35.5 1204.4 208.0)"/>
<rect x="1181.07" y="184.67" width="46.67" height="46.67" rx="1.5" fill="#4d7fc4" stroke="#0a6464" stroke-width="1" transform="rotate(-35.5 1204.4 208.0)"/>
<rect x="259.09" y="531.09" width="23.62" height="23.62" rx="3.0" fill="none" stroke="#4d7fc4" stroke-width="1.1" transform="rotate(-40.5 270.9 542.9)"/>
<rect x="260.93" y="532.93" width="19.94" height="19.94" rx="1.0" fill="#4d7fc4"  transform="rotate(-40.5 270.9 542.9)"/>
<text x="270.9" y="541.0" font-family="'DejaVu Sans','Liberation Sans',sans-serif" font-size="7.5" fill="#ffffff" fill-opacity="0.7" text-anchor="middle" >1</text>
<text x="270.9" y="549.6" font-family="'DejaVu Sans','Liberation Sans',sans-serif" font-size="5.6" fill="#ffffff" fill-opacity="0.7" text-anchor="middle" >P15</text>
<rect x="303.49" y="493.79" width="23.62" height="23.62" rx="3.0" fill="none" stroke="#4d7fc4" stroke-width="1.1" transform="rotate(-40.5 315.3 505.6)"/>
<rect x="305.33" y="495.63" width="19.94" height="19.94" rx="1.0" fill="#4d7fc4"  transform="rotate(-40.5 315.3 505.6)"/>
<text x="315.3" y="503.7" font-family="'DejaVu Sans','Liberation Sans',sans-serif" font-size="7.5" fill="#ffffff" fill-opacity="0.7" text-anchor="middle" >2</text>
<text x="315.3" y="512.3" font-family="'DejaVu Sans','Liberation Sans',sans-serif" font-size="5.6" fill="#ffffff" fill-opacity="0.7" text-anchor="middle" >----</text>
<rect x="893.19" y="493.19" width="23.62" height="23.62" rx="3.0" fill="none" stroke="#4d7fc4" stroke-width="1.1" transform="rotate(40.5 905.0 505.0)"/>
<rect x="895.03" y="495.03" width="19.94" height="19.94" rx="1.0" fill="#4d7fc4"  transform="rotate(40.5 905.0 505.0)"/>
<text x="905.0" y="503.1" font-family="'DejaVu Sans','Liberation Sans',sans-serif" font-size="7.5" fill="#ffffff" fill-opacity="0.7" text-anchor="middle" >1</text>
<text x="905.0" y="511.7" font-family="'DejaVu Sans','Liberation Sans',sans-serif" font-size="5.6" fill="#ffffff" fill-opacity="0.7" text-anchor="middle" >P6</text>
<rect x="937.49" y="531.19" width="23.62" height="23.62" rx="3.0" fill="none" stroke="#4d7fc4" stroke-width="1.1" transform="rotate(40.5 949.3 543.0)"/>
<rect x="939.33" y="533.03" width="19.94" height="19.94" rx="1.0" fill="#4d7fc4"  transform="rotate(40.5 949.3 543.0)"/>
<text x="949.3" y="541.1" font-family="'DejaVu Sans','Liberation Sans',sans-serif" font-size="7.5" fill="#ffffff" fill-opacity="0.7" text-anchor="middle" >2</text>
<text x="949.3" y="549.7" font-family="'DejaVu Sans','Liberation Sans',sans-serif" font-size="5.6" fill="#ffffff" fill-opacity="0.7" text-anchor="middle" >----</text>
<rect x="223.59" y="548.49" width="36.63" height="36.63" rx="3.5" fill="none" stroke="#e2b52f" stroke-width="1.1" transform="rotate(-40.5 241.9 566.8)"/>
<rect x="225.50" y="550.40" width="32.81" height="32.81" rx="1.5" fill="#3f86c8"  transform="rotate(-40.5 241.9 566.8)"/>
<rect x="226.20" y="551.10" width="31.40" height="31.40" rx="1.5" fill="#e2b52f"  transform="rotate(-40.5 241.9 566.8)"/>
<circle cx="241.9" cy="566.4" r="8.9" fill="#000c1b"/>
<text x="242.4" y="563.9" font-family="'DejaVu Sans','Liberation Sans',sans-serif" font-size="15" fill="#ffffff" fill-opacity="0.8" text-anchor="middle" >1</text>
<text x="242.2" y="580.2" font-family="'DejaVu Sans','Liberation Sans',sans-serif" font-size="10.5" fill="#ffffff" fill-opacity="0.72" text-anchor="middle" >P15</text>
<rect x="857.39" y="462.29" width="36.63" height="36.63" rx="3.5" fill="none" stroke="#e2b52f" stroke-width="1.1" transform="rotate(40.5 875.7 480.6)"/>
<rect x="859.30" y="464.20" width="32.81" height="32.81" rx="1.5" fill="#3f86c8"  transform="rotate(40.5 875.7 480.6)"/>
<rect x="860.00" y="464.90" width="31.40" height="31.40" rx="1.5" fill="#e2b52f"  transform="rotate(40.5 875.7 480.6)"/>
<circle cx="875.7" cy="480.2" r="8.9" fill="#000c1b"/>
<text x="876.2" y="477.7" font-family="'DejaVu Sans','Liberation Sans',sans-serif" font-size="15" fill="#ffffff" fill-opacity="0.8" text-anchor="middle" >1</text>
<text x="876.0" y="494.0" font-family="'DejaVu Sans','Liberation Sans',sans-serif" font-size="10.5" fill="#ffffff" fill-opacity="0.72" text-anchor="middle" >P6</text>
<circle cx="344.1" cy="480.9" r="19.6" fill="none" stroke="#e2b52f" stroke-width="1"/>
<circle cx="344.1" cy="480.9" r="18.4" fill="#4d7fc4"/>
<circle cx="344.1" cy="480.9" r="17.7" fill="#e2b52f"/>
<circle cx="344.1" cy="480.9" r="9" fill="#000c1b"/>
<text x="344.1" y="477.4" font-family="'DejaVu Sans','Liberation Sans',sans-serif" font-size="13.5" fill="#ffffff" fill-opacity="0.85" text-anchor="middle" >2</text>
<text x="344.1" y="486.1" font-family="'DejaVu Sans','Liberation Sans',sans-serif" font-size="3.4" fill="#ffffff" fill-opacity="0.7" text-anchor="middle" >space_cluster</text>
<circle cx="977.9" cy="566.6" r="19.6" fill="none" stroke="#e2b52f" stroke-width="1"/>
<circle cx="977.9" cy="566.6" r="18.4" fill="#4d7fc4"/>
<circle cx="977.9" cy="566.6" r="17.7" fill="#e2b52f"/>
<circle cx="977.9" cy="566.6" r="9" fill="#000c1b"/>
<text x="977.9" y="563.1" font-family="'DejaVu Sans','Liberation Sans',sans-serif" font-size="13.5" fill="#ffffff" fill-opacity="0.85" text-anchor="middle" >2</text>
<text x="977.9" y="571.8" font-family="'DejaVu Sans','Liberation Sans',sans-serif" font-size="3.4" fill="#ffffff" fill-opacity="0.7" text-anchor="middle" >thumb_cluster</text>
<rect x="567.6" y="122.2" width="20.3" height="33.3" fill="#c83434" stroke="#6a3a9a" stroke-width="0.6"/>
<text transform="translate(576.1 138.8) rotate(-90)" font-family="'DejaVu Sans Mono','Liberation Mono',monospace" font-size="8.8" fill="#ffe9e4" fill-opacity="0.88" text-anchor="middle">2</text>
<text transform="translate(585.8 138.8) rotate(-90)" font-family="'DejaVu Sans Mono','Liberation Mono',monospace" font-size="8.8" fill="#ffe9e4" fill-opacity="0.88" text-anchor="middle">RST</text>
<rect x="632.4" y="122.2" width="20.3" height="33.3" fill="#c83434" stroke="#6a3a9a" stroke-width="0.6"/>
<text transform="translate(640.9 138.8) rotate(-90)" font-family="'DejaVu Sans Mono','Liberation Mono',monospace" font-size="8.8" fill="#ffe9e4" fill-opacity="0.88" text-anchor="middle">1</text>
<text transform="translate(650.6 138.8) rotate(-90)" font-family="'DejaVu Sans Mono','Liberation Mono',monospace" font-size="8.8" fill="#ffe9e4" fill-opacity="0.88" text-anchor="middle">GND</text>
<g transform="translate(292.9 524.6) rotate(-40.5)" stroke="#efb9a6" stroke-width="1.9" fill="none" stroke-linecap="round" stroke-linejoin="round">
<path d="M-13.6 0 L14.5 0 M-5.9 -10.3 L-5.9 10.3 M-5.9 0 L4.8 -7.5 L4.8 7.5 Z"/>
</g>
<path d="M288.1 524.6 h9.6 M292.9 519.6 v10" stroke="#ff2fe3" stroke-width="1.1"/>
<g transform="translate(926.3 524.6) rotate(40.5)" stroke="#efb9a6" stroke-width="1.9" fill="none" stroke-linecap="round" stroke-linejoin="round">
<path d="M-13.6 0 L14.5 0 M-5.9 -10.3 L-5.9 10.3 M-5.9 0 L4.8 -7.5 L4.8 7.5 Z"/>
</g>
<path d="M921.5 524.6 h9.6 M926.3 519.6 v10" stroke="#ff2fe3" stroke-width="1.1"/>
<g style="mix-blend-mode:screen" stroke="#005e6c" stroke-width="1.05" fill="none">
<line x1="389.3" y1="92.0" x2="270.9" y2="540.5"/>
<line x1="482.3" y1="92.0" x2="491.0" y2="458.3"/>
<line x1="483.8" y1="92.0" x2="495.8" y2="466.4"/>
<line x1="486.5" y1="92.0" x2="499.0" y2="474.2"/>
<line x1="737.0" y1="92.0" x2="729.6" y2="442.0"/>
<line x1="803.8" y1="92.0" x2="875.7" y2="480.6"/>
<line x1="577.5" y1="92.0" x2="577.5" y2="139.0"/>
<line x1="642.5" y1="92.0" x2="642.5" y2="139.0"/>
<line x1="1163.0" y1="93.2" x2="1200.0" y2="114.0"/>
<line x1="505.0" y1="434.5" x2="732.8" y2="434.5"/>
<line x1="509.0" y1="442.5" x2="729.6" y2="442.5"/>
<line x1="512.1" y1="449.5" x2="727.9" y2="449.5"/>
<line x1="515.9" y1="457.5" x2="724.7" y2="457.5"/>
<line x1="515.9" y1="465.5" x2="721.9" y2="465.5"/>
<line x1="518.9" y1="473.5" x2="719.7" y2="473.5"/>
</g>
<path d="M1150.5 758 V827 M1110 798.5 H1186" stroke="#b9b9b9" stroke-width="1" fill="none"/>
</svg></div>
<div class="abs" style="left:-1px;top:98px;width:30px;height:30px;background:#101c31;border:1px solid #3b6393"></div>
<div class="abs" style="left:-1px;top:226px;width:30px;height:30px;background:#101c31;border:1px solid #3b6393"></div>
<div class="abs" style="left:-1px;top:340px;width:30px;height:30px;background:#101c31;border:1px solid #3b6393"></div>
<div class="abs" style="left:-1px;top:486px;width:30px;height:30px;background:#101c31;border:1px solid #3b6393"></div>
<div class="abs" style="left:-1px;top:664px;width:30px;height:30px;background:#101c31;border:1px solid #3b6393"></div>
<div class="abs" style="left:3px;top:293px;width:22px;height:1px;background:#4e4e4e"></div>
<div class="abs" style="left:3px;top:334px;width:22px;height:1px;background:#4e4e4e"></div>
<div class="abs" style="left:3px;top:407px;width:22px;height:1px;background:#4e4e4e"></div>
<div class="abs" style="left:3px;top:480px;width:22px;height:1px;background:#4e4e4e"></div>
<div class="abs" style="left:3px;top:553px;width:22px;height:1px;background:#4e4e4e"></div>
<div class="abs" style="left:3px;top:658px;width:22px;height:1px;background:#4e4e4e"></div>
<svg class="ic" style="left:2.0px;top:101.0px" width="24" height="24" viewBox="0 0 24 24"><g fill="#ded3dd"><circle cx="2.0" cy="2.0" r="1.35"/><circle cx="2.0" cy="8.6" r="1.35"/><circle cx="2.0" cy="15.2" r="1.35"/><circle cx="2.0" cy="21.8" r="1.35"/><circle cx="8.6" cy="2.0" r="1.35"/><circle cx="8.6" cy="8.6" r="1.35"/><circle cx="8.6" cy="15.2" r="1.35"/><circle cx="8.6" cy="21.8" r="1.35"/><circle cx="15.2" cy="2.0" r="1.35"/><circle cx="15.2" cy="8.6" r="1.35"/><circle cx="15.2" cy="15.2" r="1.35"/><circle cx="15.2" cy="21.8" r="1.35"/><circle cx="21.8" cy="2.0" r="1.35"/><circle cx="21.8" cy="8.6" r="1.35"/><circle cx="21.8" cy="15.2" r="1.35"/><circle cx="21.8" cy="21.8" r="1.35"/></g></svg>
<svg class="ic" style="left:2.0px;top:133.5px" width="24" height="24" viewBox="0 0 24 24"><path d="M3.5 1.5 V20.5 H22.5" fill="none" stroke="#ded3dd" stroke-width="1.2"/><path d="M3.5 0 L1.6 3.5 H5.4 Z M24 20.5 L20.5 18.6 V22.4 Z" fill="#ded3dd"/><path d="M3.5 20.5 L21 2.5" stroke="#ded3dd" stroke-width="1.2"/><path d="M8 16 A6.5 6.5 0 0 1 10 20.5" fill="none" stroke="#ded3dd" stroke-width=".9"/><circle cx="22" cy="2.2" r="2" fill="#f2647e"/><text x="7" y="9.5" font-family="Liberation Sans,sans-serif" font-size="9" fill="#ded3dd">r</text><text x="14.5" y="17" font-family="Liberation Sans,sans-serif" font-style="italic" font-size="8.5" fill="#ded3dd">θ</text></svg>
<svg class="ic" style="left:2.0px;top:165.0px" width="24" height="24" viewBox="0 0 24 24"><text x="12" y="10.8" font-family="Liberation Sans,sans-serif" font-size="12" font-weight="bold" fill="#ded3dd" text-anchor="middle" transform="translate(12 0) scale(0.92 1) translate(-12 0)">in</text><path d="M3 17.5 H21" stroke="#ded3dd" stroke-width="1.3"/><path d="M1 17.5 L5.5 14.8 V20.2 Z M23 17.5 L18.5 14.8 V20.2 Z" fill="#ded3dd"/></svg>
<svg class="ic" style="left:2.0px;top:197.0px" width="24" height="24" viewBox="0 0 24 24"><text x="12" y="10.8" font-family="Liberation Sans,sans-serif" font-size="12" font-weight="bold" fill="#ded3dd" text-anchor="middle" transform="translate(12 0) scale(0.92 1) translate(-12 0)">mil</text><path d="M3 17.5 H21" stroke="#ded3dd" stroke-width="1.3"/><path d="M1 17.5 L5.5 14.8 V20.2 Z M23 17.5 L18.5 14.8 V20.2 Z" fill="#ded3dd"/></svg>
<svg class="ic" style="left:2.0px;top:229.0px" width="24" height="24" viewBox="0 0 24 24"><text x="12" y="10.8" font-family="Liberation Sans,sans-serif" font-size="12" font-weight="bold" fill="#ded3dd" text-anchor="middle" transform="translate(12 0) scale(0.92 1) translate(-12 0)">mm</text><path d="M3 17.5 H21" stroke="#ded3dd" stroke-width="1.3"/><path d="M1 17.5 L5.5 14.8 V20.2 Z M23 17.5 L18.5 14.8 V20.2 Z" fill="#ded3dd"/></svg>
<svg class="ic" style="left:2.0px;top:261.0px" width="24" height="24" viewBox="0 0 24 24"><path d="M12 0.5 V9 M0.5 12 H9 M15 12 H23" stroke="#ded3dd" stroke-width="1"/><path d="M12 8 V16 M8 12 H16" stroke="#39b4ea" stroke-width="2.6"/><path d="M12.5 11.5 L20.5 18.5 L16.8 18.9 L18.8 22.8 L17 23.6 L15.1 19.8 L12.5 22 Z" fill="#bdb8bd"/></svg>
<svg class="ic" style="left:2.0px;top:302.0px" width="24" height="24" viewBox="0 0 24 24"><path d="M3 1.5 V22 M0.5 19 H23" fill="none" stroke="#ded3dd" stroke-width="1.6"/><path d="M3 19 L20 5" stroke="#ded3dd" stroke-width="1.6"/><path d="M3 13 H9.5 V19" fill="none" stroke="#ded3dd" stroke-width="1.2"/></svg>
<svg class="ic" style="left:2.0px;top:343.0px" width="24" height="24" viewBox="0 0 24 24"><path d="M5.5 5.5 L19 18.5 M19.5 7.5 L6 19.5 M5.5 5.5 L24 9" stroke="#ded3dd" stroke-width="1.1"/><g fill="#fff"><circle cx="5.5" cy="5.5" r="2.6"/><circle cx="19.5" cy="7.5" r="2.6"/><circle cx="6.5" cy="19.5" r="2.6"/><circle cx="20" cy="19" r="2.6"/></g></svg>
<svg class="ic" style="left:2.0px;top:375.0px" width="24" height="24" viewBox="0 0 24 24"><path d="M1 23 L23.5 0.5" stroke="#ded3dd" stroke-width="1.2"/><path d="M3.5 12.5 L13 3.5" stroke="#ded3dd" stroke-width="1.1"/><path d="M10.5 21.5 Q19 20 21.5 11" fill="none" stroke="#ded3dd" stroke-width="1.1"/><g fill="#f4eef4"><circle cx="3.5" cy="12.5" r="2.4"/><circle cx="13.5" cy="3.2" r="2.4"/><circle cx="10.5" cy="21.5" r="2.4"/><circle cx="21.5" cy="10.5" r="2.4"/></g></svg>
<svg class="ic" style="left:2.0px;top:416.0px" width="24" height="24" viewBox="0 0 24 24"><path d="M1 3.5 L7 9.5 H15 L23 17.5" fill="none" stroke="#ded3dd" stroke-width="1.5"/><path d="M5 0.5 L11 5.5 H17 L24 12.5" fill="none" stroke="#f2647e" stroke-width="2.2"/><path d="M0 14 H13 L20 22" fill="none" stroke="#b9b4b9" stroke-width="1.6"/><path d="M1 20 H9 L13 23.5" fill="none" stroke="#b9b4b9" stroke-width="1.3"/><circle cx="9.5" cy="12.5" r="3.3" fill="#fff" stroke="#f39b12" stroke-width="2"/></svg>
<svg class="ic" style="left:2.0px;top:448.0px" width="24" height="24" viewBox="0 0 24 24"><path d="M0.5 3 H9 Q14 3 14 8 V23" fill="none" stroke="#8a8a8a" stroke-width="2"/><path d="M8 -0.5 H13 Q18.5 -0.5 18.5 5 V23" fill="none" stroke="#8a8a8a" stroke-width="2"/><path d="M6 11 H24" stroke="#2f86ad" stroke-width="2.6"/><path d="M6 13 V23.5" stroke="#a55a68" stroke-width="2.6"/><circle cx="6" cy="11" r="3" fill="#8a8a8a" stroke="#c28a3a" stroke-width="1.3"/></svg>
<svg class="ic" style="left:2.0px;top:489.0px" width="24" height="24" viewBox="0 0 24 24"><path d="M8 1 H22 V8.2 H18.5 A3.2 3.2 0 1 0 18.5 12.8 H22 V22.5 H1 V11 H8 Z" fill="#39b4ea"/><path d="M16.5 10.5 H23.5" stroke="#fff" stroke-width="1.4"/><circle cx="16.2" cy="10.5" r="2" fill="#fff"/></svg>
<svg class="ic" style="left:2.0px;top:519.0px" width="24" height="24" viewBox="0 0 24 24"><path d="M8 1.5 H22 V22 H1.5 V11 H8 Z" fill="none" stroke="#39b4ea" stroke-width="1.3" stroke-dasharray="2.6 1.8"/><path d="M16.5 10.5 H23" stroke="#ded3dd" stroke-width="1.3"/><circle cx="16.2" cy="10.5" r="2" fill="#ded3dd"/></svg>
<svg class="ic" style="left:2.0px;top:561.5px" width="24" height="24" viewBox="0 0 24 24"><path d="M1.5 5.5 H23.5 V20 H1.5 V15.4 A2.8 2.8 0 0 0 1.5 9.8 Z" fill="none" stroke="#ded3dd" stroke-width="1.2"/><g fill="#39b4ea"><rect x="3.2" y="0.5" width="5.4" height="6.4"/><rect x="10" y="0.5" width="5.4" height="6.4"/><rect x="16.8" y="0.5" width="5.4" height="6.4"/></g><g fill="#323232" stroke="#39b4ea" stroke-width="1.1"><rect x="3.8" y="18.4" width="4.4" height="5.4"/><rect x="10.5" y="18.4" width="4.4" height="5.4"/><rect x="17.2" y="18.4" width="4.4" height="5.4"/></g><path d="M0.5 24 L24.5 0" stroke="#ded3dd" stroke-width="1.2"/></svg>
<svg class="ic" style="left:2.0px;top:594.0px" width="24" height="24" viewBox="0 0 24 24"><defs><clipPath id="pcl"><path d="M-3 -3 H25.5 L-3 25.5 Z"/></clipPath></defs><circle cx="12.5" cy="12.3" r="10" fill="none" stroke="#8a868a" stroke-width="1"/><circle cx="12.5" cy="12.3" r="7" fill="none" stroke="#6a666a" stroke-width=".8"/><circle cx="12.5" cy="12.3" r="4.6" fill="none" stroke="#8a868a" stroke-width="1"/><circle cx="12.5" cy="12.3" r="7.5" fill="none" stroke="#f39b12" stroke-width="6" clip-path="url(#pcl)"/><path d="M0.5 24 L24.5 0" stroke="#ded3dd" stroke-width="1.2"/></svg>
<svg class="ic" style="left:2.0px;top:625.0px" width="24" height="24" viewBox="0 0 24 24"><path d="M0.5 10.6 H12.5 V14.2 H0.5 Z" fill="#39b4ea"/><path d="M14 11.2 H24 M14 14 H24" stroke="#39b4ea" stroke-width="1.1"/><path d="M9.8 0 H13.2 V12.5 H9.8 Z" fill="#f2647e"/><path d="M10.3 14 V24 M12.8 14 V24" stroke="#f2647e" stroke-width="1.1"/><path d="M0.5 24 L24.5 0" stroke="#ded3dd" stroke-width="1.2"/></svg>
<svg class="ic" style="left:2.0px;top:667.0px" width="24" height="24" viewBox="0 0 24 24"><path d="M12 9.5 L20.6 14.2 L12 19 L3.4 14.2 Z" fill="#f39b12"/><path d="M12 6.3 L20.6 11 L12 15.8 L3.4 11 Z" fill="#f3eef3"/><path d="M12 1.5 L20.8 6.6 L12 11.7 L3.2 6.6 Z" fill="#39b4ea"/></svg>
<svg class="ic" style="left:2.0px;top:698.0px" width="24" height="24" viewBox="0 0 24 24"><path d="M3.2 21.5 L15 9.5" stroke="#ded3dd" stroke-width="3.2" stroke-linecap="round"/><path d="M14 10.5 L21.5 2.5 L23 4 L16 11.5 Z" fill="#fff"/><path d="M17 7 L22 2" stroke="#fff" stroke-width="3" stroke-linecap="round"/><path d="M8.5 9 L20.5 21.5" stroke="#39b4ea" stroke-width="3" stroke-linecap="round"/><path d="M9.8 7.8 A4.8 4.8 0 0 1 3.5 1.6 L6.2 4.3 L8.4 3.6 L8.8 1.2 A4.8 4.8 0 0 1 9.8 7.8 Z" fill="#39b4ea" transform="translate(-1.2 1.2)"/></svg><div class="abs" style="left:1186px;top:93px;width:1px;height:735px;background:#0a0a0a"></div>
<div class="abs" style="left:32px;top:827px;width:1155px;height:1px;background:#0a0a0a"></div>
<div class="abs" style="left:1189px;top:98px;width:30px;height:30px;background:#101c31;border:1px solid #3b6393"></div>
<div class="abs" style="left:1193px;top:165px;width:22px;height:1px;background:#4e4e4e"></div>
<div class="abs" style="left:1193px;top:367px;width:22px;height:1px;background:#4e4e4e"></div>
<div class="abs" style="left:1193px;top:695px;width:22px;height:1px;background:#4e4e4e"></div>
<svg class="ic" style="left:1192.0px;top:101.0px" width="24" height="24" viewBox="0 0 24 24"><path d="M7.5 3 L18.5 12.6 L13.7 13.1 L16.5 19 L14 20.2 L11.3 14.4 L7.5 17.5 Z" fill="#cfc9cf"/></svg>
<svg class="ic" style="left:1192.0px;top:133.0px" width="24" height="24" viewBox="0 0 24 24"><path d="M1.5 1.5 L22.5 22.5 M22.5 1.5 L1.5 22.5" stroke="#ded3dd" stroke-width="1.2"/><circle cx="12" cy="12" r="2.6" fill="#fff"/></svg>
<svg class="ic" style="left:1192.0px;top:173.5px" width="24" height="24" viewBox="0 0 24 24"><path d="M1.5 5 H22.5 V19.5 H1.5 V14.8 A2.6 2.6 0 0 0 1.5 9.6 Z" fill="none" stroke="#ded3dd" stroke-width="1.2"/><g fill="#39b4ea"><rect x="3.5" y="0.8" width="4.6" height="5.6"/><rect x="9.7" y="0.8" width="4.6" height="5.6"/><rect x="15.9" y="0.8" width="4.6" height="5.6"/><rect x="3.5" y="17.6" width="4.6" height="5.6"/><rect x="9.7" y="17.6" width="4.6" height="5.6"/><rect x="15.9" y="17.6" width="4.6" height="5.6"/></g></svg>
<svg class="ic" style="left:1192.0px;top:206.0px" width="24" height="24" viewBox="0 0 24 24"><path d="M1.5 21 L7.5 12 H15 L22.5 1.5" fill="none" stroke="#39b4ea" stroke-width="1.8" stroke-linecap="round" stroke-linejoin="round"/><path d="M24.5 19.5 V26.5 H17.5 Z" fill="#ded3dd"/></svg>
<svg class="ic" style="left:1192.0px;top:238.0px" width="24" height="24" viewBox="0 0 24 24"><path d="M1 14 Q2.6 14 3 16 Q3.6 18.5 5.5 18.5 Q7.6 18.5 7.6 15.5 V9.5 Q7.6 6.5 9.8 6.5 Q12 6.5 12 9.5 V15.5 Q12 18.5 14.2 18.5 Q16.4 18.5 16.4 15.5 V9.5 Q16.4 6.5 18.5 6.5 Q20.4 6.5 21 9.5 Q21.4 11.5 23 11.5" fill="none" stroke="#39b4ea" stroke-width="1.8" stroke-linecap="round"/><path d="M24.5 19.5 V26.5 H17.5 Z" fill="#ded3dd"/></svg>
<svg class="ic" style="left:1192.0px;top:270.0px" width="24" height="24" viewBox="0 0 24 24"><circle cx="12" cy="12" r="6" fill="#fff" stroke="#f39b12" stroke-width="4.4"/></svg>
<svg class="ic" style="left:1192.0px;top:301.5px" width="24" height="24" viewBox="0 0 24 24"><path d="M8 1 H23 V8.2 H19.5 A3.2 3.2 0 1 0 19.5 12.8 H23 V23 H1 V11 H8 Z" fill="#39b4ea"/><path d="M17.5 10.5 H24" stroke="#fff" stroke-width="1.4"/><circle cx="17.2" cy="10.5" r="2" fill="#fff"/></svg>
<svg class="ic" style="left:1192.0px;top:333.5px" width="24" height="24" viewBox="0 0 24 24"><defs><clipPath id="hz"><path d="M8.5 2.5 H22 V22 H1.5 V11.5 H8.5 Z"/></clipPath></defs><path d="M8.5 2.5 H22 V22 H1.5 V11.5 H8.5 Z" fill="#3a3a3a" stroke="#ded3dd" stroke-width="1.3"/><g clip-path="url(#hz)" stroke="#ded3dd" stroke-width="2"><path d="M26 12 L12 -2 M26 18 L6 -2 M26 24 L0 -2 M22 26 L-2 2 M16 26 L-2 8 M10 26 L-2 14 M4 26 L-2 20"/></g></svg>
<svg class="ic" style="left:1192.0px;top:374.0px" width="24" height="24" viewBox="0 0 24 24"><path d="M1.5 22.5 L22.5 1.5" stroke="#ded3dd" stroke-width="1.6" stroke-linecap="round"/></svg>
<svg class="ic" style="left:1192.0px;top:406.0px" width="24" height="24" viewBox="0 0 24 24"><path d="M2 22 Q2 4 21.5 2.5" fill="none" stroke="#ded3dd" stroke-width="1.6" stroke-linecap="round"/></svg>
<svg class="ic" style="left:1192.0px;top:438.5px" width="24" height="24" viewBox="0 0 24 24"><rect x="2" y="2.5" width="20" height="19" fill="#8c8c8c" stroke="#ded3dd" stroke-width="1.3"/></svg>
<svg class="ic" style="left:1192.0px;top:471.0px" width="24" height="24" viewBox="0 0 24 24"><circle cx="12" cy="12" r="9.8" fill="#8c8c8c" stroke="#ded3dd" stroke-width="1.3"/></svg>
<svg class="ic" style="left:1192.0px;top:502.5px" width="24" height="24" viewBox="0 0 24 24"><path d="M1.5 2.5 L22 5.5 L19 21.5 L2 21.5 L8.5 11.5 Z" fill="#8c8c8c" stroke="#ded3dd" stroke-width="1.3" stroke-linejoin="round"/></svg>
<svg class="ic" style="left:1192.0px;top:535.0px" width="24" height="24" viewBox="0 0 24 24"><rect x="0.8" y="1" width="22.4" height="22" rx="3.8" fill="#ded3dd"/><path d="M2.5 19.5 L9.5 10 L13.5 15.2 L15.8 12.6 L21.5 19.5 Z" fill="#4a4a4a"/><circle cx="16.5" cy="7" r="2.2" fill="#4a4a4a"/></svg>
<svg class="ic" style="left:1192.0px;top:567.5px" width="24" height="24" viewBox="0 0 24 24"><path d="M4 3.8 H20 M12 3.8 V21.5" stroke="#ded3dd" stroke-width="3.4" fill="none"/></svg>
<svg class="ic" style="left:1192.0px;top:599.0px" width="24" height="24" viewBox="0 0 24 24"><rect x="1.5" y="4" width="21" height="16.5" fill="#9b9b9b" stroke="#6a6a6a" stroke-width="1.2"/><path d="M5.5 8.8 H18.5 M5.5 12.2 H18.5 M5.5 15.6 H14.5" stroke="#3c3c3c" stroke-width="1.3"/></svg>
<svg class="ic" style="left:1192.0px;top:631.0px" width="24" height="24" viewBox="0 0 24 24"><path d="M1.1 14.7 L16.6 1.6" stroke="#ded3dd" stroke-width="1.1"/><path d="M0.3 13.7 L7.1 20.7 M15.6 0.6 L21.4 7.1" stroke="#ded3dd" stroke-width="1.1"/><path d="M1.1 14.7 l3.6 -1 l-1.8 -2.2 z M16.6 1.6 l-3.6 1 l1.8 2.2 z" fill="#ded3dd"/><circle cx="7.1" cy="20.7" r="2.6" fill="#39b4ea"/><circle cx="21.4" cy="7.1" r="2.6" fill="#39b4ea"/><path d="M24.5 19.5 V26.5 H17.5 Z" fill="#ded3dd"/></svg>
<svg class="ic" style="left:1192.0px;top:663.5px" width="24" height="24" viewBox="0 0 24 24"><path d="M3 1 L13 10 L8.6 10.5 L11.2 16 L9 17 L6.4 11.6 L3 14.5 Z" fill="#bdb7bd"/><circle cx="16.5" cy="17" r="6" fill="#f2647e"/><path d="M14 14.5 L19 19.5 M19 14.5 L14 19.5" stroke="#fff" stroke-width="1.7" stroke-linecap="round"/></svg>
<svg class="ic" style="left:1192.0px;top:706.0px" width="24" height="24" viewBox="0 0 24 24"><path d="M3 2 V20.5 H21" fill="none" stroke="#ded3dd" stroke-width="1.1"/><path d="M3 0 L1.2 3.5 H4.8 Z M23 20.5 L19.5 18.7 V22.3 Z" fill="#ded3dd"/><circle cx="13.5" cy="10" r="4" fill="#8a8a8a"/><path d="M13.5 2.5 V17.5 M6 10 H21" stroke="#ded3dd" stroke-width="1.9"/><path d="M26 20 V26 H20 Z" fill="#ded3dd"/></svg>
<svg class="ic" style="left:1192.0px;top:735.5px" width="24" height="24" viewBox="0 0 24 24"><g transform="translate(1.5 0) rotate(-40 12 12)"><rect x="1" y="8" width="22" height="8.4" fill="none" stroke="#ded3dd" stroke-width="1.8"/><path d="M5 16.4 V13 M9 16.4 V14 M13 16.4 V13 M17 16.4 V14 M20.5 16.4 V13" stroke="#ded3dd" stroke-width="1.2"/></g></svg><div class="abs" style="left:1228px;top:93px;width:1px;height:620px;background:#3c3c3c"></div>
<div class="panelhdr" style="top:93px">Appearance</div>
<div class="abs" style="left:1228px;top:133px;width:177px;height:478px;border:1px solid #4c4c4c;border-radius:6px;background:#373737"></div>
<div class="abs" style="left:1231px;top:150px;width:172px;height:436px;background:#3a3a3a"></div>
<div class="abs" style="left:1233px;top:123.5px;width:172px;height:20.5px;background:#3e3e3e;border:1px solid #4a4a4a;border-radius:6px"></div>
<div class="abs" style="left:1234px;top:123.5px;width:57px;height:20.5px;background:#6a6a6a;border-radius:6px"></div>
<div class="abs" style="left:1235px;top:125px;width:56px;height:18px;line-height:17px;text-align:center;font-size:12px;color:#ececec">Layers</div>
<div class="abs" style="left:1293px;top:125px;width:60px;height:18px;line-height:17px;text-align:center;font-size:12px;color:#e6e6e6">Objects</div>
<div class="abs" style="left:1354px;top:128px;width:1px;height:12px;background:#5a5a5a"></div>
<div class="abs" style="left:1355px;top:125px;width:46px;height:18px;line-height:17px;text-align:center;font-size:12px;color:#e6e6e6">Nets</div>
<div class="lay" style="top:151px;"><span class="sw" style="background:#c83434"></span><svg width="16" height="12" viewBox="0 0 16 12"><circle cx="8" cy="6" r="7.2" fill="#333"/><path d="M1.2 6 Q8 -0.6 14.8 6 Q8 12.6 1.2 6 Z" fill="none" stroke="#d2cdd2" stroke-width="1.1"/><circle cx="8" cy="6" r="2.1" fill="#d2cdd2"/></svg><span class="nm">F.Cu</span></div>
<div class="lay" style="top:169px;background:#464646;"><svg style="left:6px;top:3px" width="8" height="12" viewBox="0 0 8 12"><path d="M0.8 0.5 L7 6 L0.8 11.5 Z" fill="#3a4bf0"/></svg><span class="sw" style="background:#4d7fc4"></span><svg width="16" height="12" viewBox="0 0 16 12"><circle cx="8" cy="6" r="7.2" fill="#333"/><path d="M1.2 6 Q8 -0.6 14.8 6 Q8 12.6 1.2 6 Z" fill="none" stroke="#d2cdd2" stroke-width="1.1"/><circle cx="8" cy="6" r="2.1" fill="#d2cdd2"/></svg><span class="nm">B.Cu</span></div>
<div class="lay" style="top:187px;"><span class="sw" style="background:#840084"></span><svg width="16" height="12" viewBox="0 0 16 12"><circle cx="8" cy="6" r="7.2" fill="#333"/><path d="M1.2 6 Q8 -0.6 14.8 6 Q8 12.6 1.2 6 Z" fill="none" stroke="#d2cdd2" stroke-width="1.1"/><circle cx="8" cy="6" r="2.1" fill="#d2cdd2"/></svg><span class="nm">F.Adhesive</span></div>
<div class="lay" style="top:205px;"><span class="sw" style="background:#00007f"></span><svg width="16" height="12" viewBox="0 0 16 12"><circle cx="8" cy="6" r="7.2" fill="#333"/><path d="M1.2 6 Q8 -0.6 14.8 6 Q8 12.6 1.2 6 Z" fill="none" stroke="#d2cdd2" stroke-width="1.1"/><circle cx="8" cy="6" r="2.1" fill="#d2cdd2"/></svg><span class="nm">B.Adhesive</span></div>
<div class="lay" style="top:223px;"><span class="sw" style="background:#b4a09a"></span><svg width="16" height="12" viewBox="0 0 16 12"><circle cx="8" cy="6" r="7.2" fill="#333"/><path d="M1.2 6 Q8 -0.6 14.8 6 Q8 12.6 1.2 6 Z" fill="none" stroke="#d2cdd2" stroke-width="1.1"/><circle cx="8" cy="6" r="2.1" fill="#d2cdd2"/></svg><span class="nm">F.Paste</span></div>
<div class="lay" style="top:241px;"><span class="sw" style="background:#00c2c2"></span><svg width="16" height="12" viewBox="0 0 16 12"><circle cx="8" cy="6" r="7.2" fill="#333"/><path d="M1.2 6 Q8 -0.6 14.8 6 Q8 12.6 1.2 6 Z" fill="none" stroke="#d2cdd2" stroke-width="1.1"/><circle cx="8" cy="6" r="2.1" fill="#d2cdd2"/></svg><span class="nm">B.Paste</span></div>
<div class="lay" style="top:259px;"><span class="sw" style="background:#f2eda1"></span><svg width="16" height="12" viewBox="0 0 16 12"><circle cx="8" cy="6" r="7.2" fill="#333"/><path d="M1.2 6 Q8 -0.6 14.8 6 Q8 12.6 1.2 6 Z" fill="none" stroke="#d2cdd2" stroke-width="1.1"/><circle cx="8" cy="6" r="2.1" fill="#d2cdd2"/></svg><span class="nm">F.Silkscreen</span></div>
<div class="lay" style="top:277px;"><span class="sw" style="background:#e8b2a7"></span><svg width="16" height="12" viewBox="0 0 16 12"><circle cx="8" cy="6" r="7.2" fill="#333"/><path d="M1.2 6 Q8 -0.6 14.8 6 Q8 12.6 1.2 6 Z" fill="none" stroke="#d2cdd2" stroke-width="1.1"/><circle cx="8" cy="6" r="2.1" fill="#d2cdd2"/></svg><span class="nm">B.Silkscreen</span></div>
<div class="lay" style="top:295px;"><span class="sw" style="background:#5a2f82"></span><svg width="16" height="12" viewBox="0 0 16 12"><circle cx="8" cy="6" r="7.2" fill="#333"/><path d="M1.2 6 Q8 -0.6 14.8 6 Q8 12.6 1.2 6 Z" fill="none" stroke="#d2cdd2" stroke-width="1.1"/><circle cx="8" cy="6" r="2.1" fill="#d2cdd2"/></svg><span class="nm">F.Mask</span></div>
<div class="lay" style="top:313px;"><span class="sw" style="background:#027b7b"></span><svg width="16" height="12" viewBox="0 0 16 12"><circle cx="8" cy="6" r="7.2" fill="#333"/><path d="M1.2 6 Q8 -0.6 14.8 6 Q8 12.6 1.2 6 Z" fill="none" stroke="#d2cdd2" stroke-width="1.1"/><circle cx="8" cy="6" r="2.1" fill="#d2cdd2"/></svg><span class="nm">B.Mask</span></div>
<div class="lay" style="top:331px;"><span class="sw" style="background:#c2c2c2"></span><svg width="16" height="12" viewBox="0 0 16 12"><circle cx="8" cy="6" r="7.2" fill="#333"/><path d="M1.2 6 Q8 -0.6 14.8 6 Q8 12.6 1.2 6 Z" fill="none" stroke="#d2cdd2" stroke-width="1.1"/><circle cx="8" cy="6" r="2.1" fill="#d2cdd2"/></svg><span class="nm">User.Drawings</span></div>
<div class="lay" style="top:349px;"><span class="sw" style="background:#5994dc"></span><svg width="16" height="12" viewBox="0 0 16 12"><circle cx="8" cy="6" r="7.2" fill="#333"/><path d="M1.2 6 Q8 -0.6 14.8 6 Q8 12.6 1.2 6 Z" fill="none" stroke="#d2cdd2" stroke-width="1.1"/><circle cx="8" cy="6" r="2.1" fill="#d2cdd2"/></svg><span class="nm">User.Comments</span></div>
<div class="lay" style="top:367px;"><span class="sw" style="background:#b4dbd2"></span><svg width="16" height="12" viewBox="0 0 16 12"><circle cx="8" cy="6" r="7.2" fill="#333"/><path d="M1.2 6 Q8 -0.6 14.8 6 Q8 12.6 1.2 6 Z" fill="none" stroke="#d2cdd2" stroke-width="1.1"/><circle cx="8" cy="6" r="2.1" fill="#d2cdd2"/></svg><span class="nm">User.Eco1</span></div>
<div class="lay" style="top:385px;"><span class="sw" style="background:#d8c852"></span><svg width="16" height="12" viewBox="0 0 16 12"><circle cx="8" cy="6" r="7.2" fill="#333"/><path d="M1.2 6 Q8 -0.6 14.8 6 Q8 12.6 1.2 6 Z" fill="none" stroke="#d2cdd2" stroke-width="1.1"/><circle cx="8" cy="6" r="2.1" fill="#d2cdd2"/></svg><span class="nm">User.Eco2</span></div>
<div class="lay" style="top:403px;"><span class="sw" style="background:#d0d2cd"></span><svg width="16" height="12" viewBox="0 0 16 12"><circle cx="8" cy="6" r="7.2" fill="#333"/><path d="M1.2 6 Q8 -0.6 14.8 6 Q8 12.6 1.2 6 Z" fill="none" stroke="#d2cdd2" stroke-width="1.1"/><circle cx="8" cy="6" r="2.1" fill="#d2cdd2"/></svg><span class="nm">Edge.Cuts</span></div>
<div class="lay" style="top:421px;"><span class="sw" style="background:#ff26e2"></span><svg width="16" height="12" viewBox="0 0 16 12"><circle cx="8" cy="6" r="7.2" fill="#333"/><path d="M1.2 6 Q8 -0.6 14.8 6 Q8 12.6 1.2 6 Z" fill="none" stroke="#d2cdd2" stroke-width="1.1"/><circle cx="8" cy="6" r="2.1" fill="#d2cdd2"/></svg><span class="nm">Margin</span></div>
<div class="lay" style="top:439px;"><span class="sw" style="background:#ff26e2"></span><svg width="16" height="12" viewBox="0 0 16 12"><circle cx="8" cy="6" r="7.2" fill="#333"/><path d="M1.2 6 Q8 -0.6 14.8 6 Q8 12.6 1.2 6 Z" fill="none" stroke="#d2cdd2" stroke-width="1.1"/><circle cx="8" cy="6" r="2.1" fill="#d2cdd2"/></svg><span class="nm">F.Courtyard</span></div>
<div class="lay" style="top:457px;"><span class="sw" style="background:#26e9ff"></span><svg width="16" height="12" viewBox="0 0 16 12"><circle cx="8" cy="6" r="7.2" fill="#333"/><path d="M1.2 6 Q8 -0.6 14.8 6 Q8 12.6 1.2 6 Z" fill="none" stroke="#d2cdd2" stroke-width="1.1"/><circle cx="8" cy="6" r="2.1" fill="#d2cdd2"/></svg><span class="nm">B.Courtyard</span></div>
<div class="lay" style="top:475px;"><span class="sw" style="background:#afafaf"></span><svg width="16" height="12" viewBox="0 0 16 12"><circle cx="8" cy="6" r="7.2" fill="#333"/><path d="M1.2 6 Q8 -0.6 14.8 6 Q8 12.6 1.2 6 Z" fill="none" stroke="#d2cdd2" stroke-width="1.1"/><circle cx="8" cy="6" r="2.1" fill="#d2cdd2"/></svg><span class="nm">F.Fab</span></div>
<div class="lay" style="top:493px;"><span class="sw" style="background:#585d84"></span><svg width="16" height="12" viewBox="0 0 16 12"><circle cx="8" cy="6" r="7.2" fill="#333"/><path d="M1.2 6 Q8 -0.6 14.8 6 Q8 12.6 1.2 6 Z" fill="none" stroke="#d2cdd2" stroke-width="1.1"/><circle cx="8" cy="6" r="2.1" fill="#d2cdd2"/></svg><span class="nm">B.Fab</span></div>
<svg class="ic" style="left:1242px;top:594px" width="8" height="11" viewBox="0 0 8 11"><path d="M1 0.8 L6.5 5.5 L1 10.2 Z" fill="#e6e6e6"/></svg>
<div class="abs" style="left:1250px;top:591px;font-size:12.6px;line-height:17px;color:#e4e4e4;white-space:nowrap">Layer Display Options</div>
<div class="abs" style="left:1235px;top:610px;font-size:12.6px;line-height:17px;color:#e4e4e4;white-space:nowrap">Presets (Ctrl+Tab):</div>
<div class="dd" style="left:1235px;top:628px;width:166px;height:19px;line-height:19px;font-size:13px">All Layers<span class="st" style="top:1.5px;right:1.5px"><svg width="16" height="16" viewBox="0 0 16 16"><path d="M5 6.5L8 3.5L11 6.5M5 9.5L8 12.5L11 9.5" fill="none" stroke="#fff" stroke-width="1.5" stroke-linecap="round" stroke-linejoin="round"/></svg></span></div>
<div class="abs" style="left:1235px;top:651px;font-size:12.8px;line-height:17px;color:#e4e4e4;white-space:nowrap">Viewports (Option+Tab):</div>
<div class="dd" style="left:1235px;top:669px;width:166px;height:19px;line-height:19px;font-size:13px"><span style="position:absolute;left:6px;top:9px;width:138px;height:1px;background:#9a9a9a"></span><span class="st" style="top:1.5px;right:1.5px"><svg width="16" height="16" viewBox="0 0 16 16"><path d="M5 6.5L8 3.5L11 6.5M5 9.5L8 12.5L11 9.5" fill="none" stroke="#fff" stroke-width="1.5" stroke-linecap="round" stroke-linejoin="round"/></svg></span></div>
<div class="abs" style="left:1228px;top:693px;width:1px;height:130px;background:#3c3c3c"></div>
<div class="panelhdr" style="top:705px;height:17px;line-height:17px;font-size:11.8px">Selection Filter</div>
<div class="cb" style="left:1233px;top:728px"><svg width="14" height="14" viewBox="0 0 14 14"><path d="M3.3 7.4 L6 10.2 L10.8 3.8" fill="none" stroke="#fff" stroke-width="1.7" stroke-linecap="round" stroke-linejoin="round"/></svg></div><div class="cbl" style="left:1253.5px;top:727px">All items</div>
<div class="cb" style="left:1333px;top:728px"><svg width="14" height="14" viewBox="0 0 14 14"><path d="M3.3 7.4 L6 10.2 L10.8 3.8" fill="none" stroke="#fff" stroke-width="1.7" stroke-linecap="round" stroke-linejoin="round"/></svg></div><div class="cbl" style="left:1353px;top:727px">Locked items</div>
<div class="cb" style="left:1233px;top:744px"><svg width="14" height="14" viewBox="0 0 14 14"><path d="M3.3 7.4 L6 10.2 L10.8 3.8" fill="none" stroke="#fff" stroke-width="1.7" stroke-linecap="round" stroke-linejoin="round"/></svg></div><div class="cbl" style="left:1253.5px;top:743px">Footprints</div>
<div class="cb" style="left:1333px;top:744px"><svg width="14" height="14" viewBox="0 0 14 14"><path d="M3.3 7.4 L6 10.2 L10.8 3.8" fill="none" stroke="#fff" stroke-width="1.7" stroke-linecap="round" stroke-linejoin="round"/></svg></div><div class="cbl" style="left:1353px;top:743px">Text</div>
<div class="cb" style="left:1233px;top:760px"><svg width="14" height="14" viewBox="0 0 14 14"><path d="M3.3 7.4 L6 10.2 L10.8 3.8" fill="none" stroke="#fff" stroke-width="1.7" stroke-linecap="round" stroke-linejoin="round"/></svg></div><div class="cbl" style="left:1253.5px;top:759px">Tracks</div>
<div class="cb" style="left:1333px;top:760px"><svg width="14" height="14" viewBox="0 0 14 14"><path d="M3.3 7.4 L6 10.2 L10.8 3.8" fill="none" stroke="#fff" stroke-width="1.7" stroke-linecap="round" stroke-linejoin="round"/></svg></div><div class="cbl" style="left:1353px;top:759px">Vias</div>
<div class="cb" style="left:1233px;top:776px"><svg width="14" height="14" viewBox="0 0 14 14"><path d="M3.3 7.4 L6 10.2 L10.8 3.8" fill="none" stroke="#fff" stroke-width="1.7" stroke-linecap="round" stroke-linejoin="round"/></svg></div><div class="cbl" style="left:1253.5px;top:775px">Pads</div>
<div class="cb" style="left:1333px;top:776px"><svg width="14" height="14" viewBox="0 0 14 14"><path d="M3.3 7.4 L6 10.2 L10.8 3.8" fill="none" stroke="#fff" stroke-width="1.7" stroke-linecap="round" stroke-linejoin="round"/></svg></div><div class="cbl" style="left:1353px;top:775px">Graphics</div>
<div class="cb" style="left:1233px;top:792px"><svg width="14" height="14" viewBox="0 0 14 14"><path d="M3.3 7.4 L6 10.2 L10.8 3.8" fill="none" stroke="#fff" stroke-width="1.7" stroke-linecap="round" stroke-linejoin="round"/></svg></div><div class="cbl" style="left:1253.5px;top:791px">Zones</div>
<div class="cb" style="left:1333px;top:792px"><svg width="14" height="14" viewBox="0 0 14 14"><path d="M3.3 7.4 L6 10.2 L10.8 3.8" fill="none" stroke="#fff" stroke-width="1.7" stroke-linecap="round" stroke-linejoin="round"/></svg></div><div class="cbl" style="left:1353px;top:791px">Rule Areas</div>
<div class="cb" style="left:1233px;top:808px"><svg width="14" height="14" viewBox="0 0 14 14"><path d="M3.3 7.4 L6 10.2 L10.8 3.8" fill="none" stroke="#fff" stroke-width="1.7" stroke-linecap="round" stroke-linejoin="round"/></svg></div><div class="cbl" style="left:1253.5px;top:807px">Dimensions</div>
<div class="cb" style="left:1333px;top:808px"><svg width="14" height="14" viewBox="0 0 14 14"><path d="M3.3 7.4 L6 10.2 L10.8 3.8" fill="none" stroke="#fff" stroke-width="1.7" stroke-linecap="round" stroke-linejoin="round"/></svg></div><div class="cbl" style="left:1353px;top:807px">Other items</div><div class="inf" style="left:8px;top:832px">Pads</div><div class="inf" style="left:8px;top:848px">858</div>
<div class="inf" style="left:64px;top:832px">Vias</div><div class="inf" style="left:64px;top:848px">0</div>
<div class="inf" style="left:117px;top:832px">Track Segments</div><div class="inf" style="left:117px;top:848px">805</div>
<div class="inf" style="left:232px;top:832px">Nets</div><div class="inf" style="left:232px;top:848px">80</div>
<div class="inf" style="left:287px;top:832px">Unrouted</div><div class="inf" style="left:287px;top:848px">37</div>
<div class="abs" style="left:0;top:861px;width:1403px;height:1px;background:#111"></div>
<div class="stt" style="left:3px">File '/Users/stu/pcb/tutorial/output/pcbs/_autosave-tutorial.kicad_pcb' sa...</div>
<div class="stt" style="left:409px">Z 4.89</div>
<div class="stt" style="left:481px">X 229.6000&nbsp; Y 217.4000</div>
<div class="stt" style="left:638px">dx 229.6000&nbsp; dy 217.4000&nbsp; dist 316.1944</div>
<div class="stt" style="left:889px">grid X 0.2000&nbsp; Y 0.2000</div>
<div class="stt" style="left:1070px">mm</div>
<div class="stt" style="left:1125px">Select item(s)</div></body></html>
